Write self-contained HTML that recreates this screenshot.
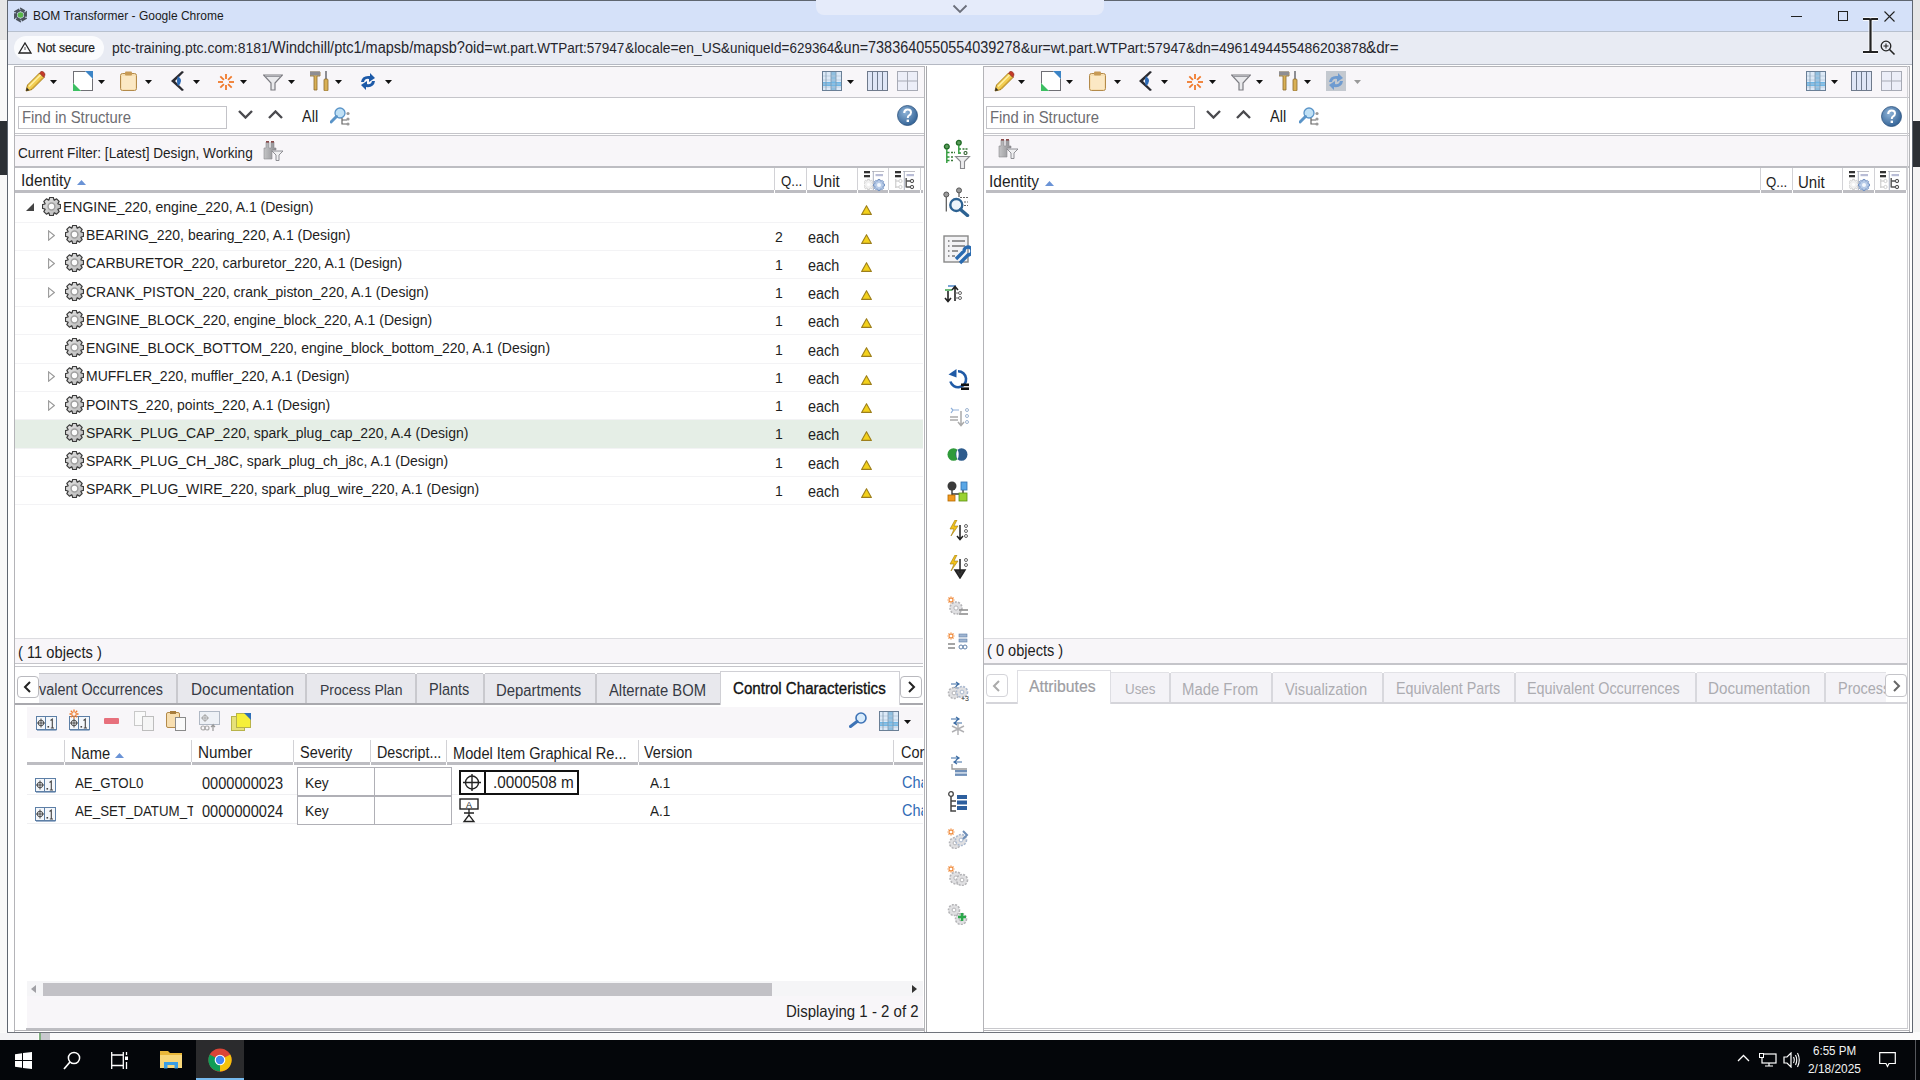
<!DOCTYPE html>
<html><head><meta charset="utf-8"><title>BOM Transformer</title><style>
*{box-sizing:border-box;margin:0;padding:0}
html,body{width:1920px;height:1080px;overflow:hidden;background:#f0f0f0;font-family:"Liberation Sans",sans-serif;color:#1e1e1e}
.a{position:absolute;display:block}
.t{position:absolute;white-space:nowrap;line-height:16px}
</style></head><body>
<div class="a" style="left:0px;top:0px;width:7px;height:1040px;background:#f8f8f8"></div>
<div class="a" style="left:0px;top:0px;width:7px;height:40px;background:#e6e6e6"></div>
<div class="a" style="left:0px;top:121px;width:7px;height:54px;background:#2c3035"></div>
<div class="a" style="left:1912px;top:0px;width:8px;height:1040px;background:#f4f4f4"></div>
<div class="a" style="left:1912px;top:0px;width:8px;height:40px;background:#e6e6e6"></div>
<div class="a" style="left:1912px;top:121px;width:8px;height:46px;background:#2c3035"></div>
<div class="a" style="left:0px;top:1032px;width:1920px;height:8px;background:#fbfbfb"></div>
<div class="a" style="left:0px;top:1033px;width:38px;height:7px;background:#f3f3f5"></div>
<div class="a" style="left:39px;top:1033px;width:2px;height:7px;background:#7fae7f"></div>
<div class="a" style="left:41px;top:1033px;width:9px;height:7px;background:#c9c9cf"></div>
<div class="a" style="left:7px;top:0px;width:1906px;height:1033px;background:#fff;border:1px solid #5f6670"></div>
<div class="a" style="left:8px;top:1px;width:1904px;height:31px;background:#d5e1f9"></div>
<div class="a" style="left:8px;top:31px;width:1904px;height:1px;background:#b7c0ce"></div>
<div class="a" style="left:816px;top:0px;width:288px;height:15px;background:#e5ebfa;border-radius:0 0 8px 8px"></div>
<svg class="a" style="left:952px;top:4px" width="16" height="10" viewBox="0 0 16 10"><path d="M1.5 1.5 L8 8 L14.5 1.5" stroke="#6b6f7b" stroke-width="1.8" fill="none"/></svg>
<svg class="a" style="left:13px;top:7px" width="15" height="16" viewBox="0 0 15 16"><polygon points="12.35,10.80 7.50,13.60 2.65,10.80 2.65,5.20 7.50,2.40 12.35,5.20" fill="none" stroke="#4b535d" stroke-width="3.2" stroke-dasharray="4.6 1"/><circle cx="7.5" cy="8" r="2.8" fill="#58b548"/></svg>
<div class="t" style="left:33px;top:8px;font-size:13.20px;color:#1b1b1b;transform:scaleX(0.9091);transform-origin:0 0;">BOM Transformer - Google Chrome</div>
<div class="a" style="left:1791px;top:16px;width:11px;height:1px;background:#222"></div>
<div class="a" style="left:1838px;top:11px;width:10px;height:10px;border:1.5px solid #222"></div>
<svg class="a" style="left:1884px;top:11px" width="11" height="11" viewBox="0 0 11 11"><path d="M0.5 0.5 L10.5 10.5 M10.5 0.5 L0.5 10.5" stroke="#222" stroke-width="1.1"/></svg>
<div class="a" style="left:8px;top:32px;width:1904px;height:33px;background:#e8ebf3"></div>
<div class="a" style="left:8px;top:64px;width:1904px;height:1px;background:#b5b9c3"></div>
<div class="a" style="left:14px;top:36px;width:90px;height:24px;background:#fafbfd;border-radius:12px"></div>
<svg class="a" style="left:18px;top:42px" width="14" height="12" viewBox="0 0 14 12"><path d="M7 1 L13 11 H1 Z" fill="none" stroke="#222" stroke-width="1.3"/><path d="M7 5 V8" stroke="#777" stroke-width="1.2"/></svg>
<div class="t" style="left:37px;top:40px;font-size:13.20px;color:#1e1e1e;transform:scaleX(0.9091);transform-origin:0 0;-webkit-text-stroke:0.25px #1e1e1e">Not secure</div>
<div class="t" style="left:111.5px;top:40px;font-size:15.36px;color:#26262c;transform:scaleX(0.9091);transform-origin:0 0;">ptc-training.ptc.com:8181</div>
<div class="t" style="left:268.3px;top:40px;font-size:15.98px;color:#26262c;transform:scaleX(0.9091);transform-origin:0 0;">/Windchill/ptc1/mapsb/mapsb?oid=</div>
<div class="t" style="left:493.3px;top:40px;font-size:14.85px;color:#26262c;transform:scaleX(0.9091);transform-origin:0 0;">wt.part.WTPart:57947</div>
<div class="t" style="left:624.5px;top:40px;font-size:15.26px;color:#26262c;transform:scaleX(0.9091);transform-origin:0 0;">&amp;locale=en_US</div>
<div class="t" style="left:720.5px;top:40px;font-size:14.81px;color:#26262c;transform:scaleX(0.9091);transform-origin:0 0;">&amp;uniqueId=629364</div>
<div class="t" style="left:833.9px;top:40px;font-size:15.87px;color:#26262c;transform:scaleX(0.9091);transform-origin:0 0;">&amp;un=7383640550554039278</div>
<div class="t" style="left:1020.5px;top:40px;font-size:15.29px;color:#26262c;transform:scaleX(0.9091);transform-origin:0 0;">&amp;ur=wt.part.WTPart:57947</div>
<div class="t" style="left:1185.5px;top:40px;font-size:15.36px;color:#26262c;transform:scaleX(0.9091);transform-origin:0 0;">&amp;dn=4961494455486203878</div>
<div class="t" style="left:1366.0px;top:40px;font-size:16.72px;color:#26262c;transform:scaleX(0.9091);transform-origin:0 0;">&amp;dr=</div>
<svg class="a" style="left:1861px;top:16px" width="19" height="39" viewBox="0 0 19 39"><path d="M2 3 H8 Q9.5 3 9.5 4.5 V34.5 Q9.5 36 8 36 H2 M17 3 H11 Q9.5 3 9.5 4.5 M9.5 34.5 Q9.5 36 11 36 H17" stroke="#fff" stroke-width="4" fill="none" opacity="0.8"/><path d="M2 3 H8 Q9.5 3 9.5 4.5 V34.5 Q9.5 36 8 36 H2 M17 3 H11 Q9.5 3 9.5 4.5 M9.5 34.5 Q9.5 36 11 36 H17" stroke="#222" stroke-width="2.2" fill="none"/></svg>
<svg class="a" style="left:1880px;top:40px" width="16" height="16" viewBox="0 0 16 16"><circle cx="6" cy="6" r="4.8" fill="none" stroke="#222" stroke-width="1.3"/><path d="M3.5 6 H8.5 M6 3.5 V8.5" stroke="#222" stroke-width="1.1"/><path d="M9.5 9.5 L14.5 14.5" stroke="#222" stroke-width="1.6"/></svg>
<div class="a" style="left:8px;top:65px;width:1903px;height:967px;background:#fff"></div>
<div class="a" style="left:14px;top:66px;width:911px;height:966px;border:1px solid #b4b4b8;border-bottom:none;background:#fff"></div>
<div class="a" style="left:15px;top:67px;width:909px;height:31px;background:#f8f6f9"></div>
<div class="a" style="left:15px;top:97px;width:909px;height:1px;background:#c5c5ca"></div>
<div class="a" style="left:15px;top:133px;width:909px;height:1px;background:#c5c5ca"></div>
<div class="a" style="left:15px;top:135px;width:909px;height:1px;background:#c5c5ca"></div>
<div class="a" style="left:15px;top:136px;width:909px;height:30px;background:#f8f6f9"></div>
<div class="a" style="left:15px;top:166px;width:909px;height:2px;background:#bdbdc2"></div>
<svg class="a" style="left:25px;top:71px" width="21" height="21" viewBox="0 0 21 21"><path d="M1 20 L2.5 14 L14.5 2 L19 6.5 L7 18.5 Z" fill="#f2cd52" stroke="#a87f1e" stroke-width="1"/><path d="M14.5 2 L16 0.6 Q17.3 -0.2 18.8 1.2 Q20.6 3 19.8 4.4 L19 6.5 Z" fill="#c43a2a" stroke="#8a2a1e" stroke-width="0.6"/><path d="M1 20 L1.8 16.6 L4.4 19.2 Z" fill="#2b2b2b"/><path d="M4 15.5 L15.5 4" stroke="#fff1a8" stroke-width="1.4"/><path d="M6.5 18 L18 6.5" stroke="#c99a2a" stroke-width="1"/></svg>
<svg class="a" style="left:50px;top:80px" width="7" height="4" viewBox="0 0 7 4"><path d="M0 0H7L3.5 4Z" fill="#111"/></svg>
<svg class="a" style="left:73px;top:71px" width="20" height="20" viewBox="0 0 20 20"><rect x="0.5" y="0.5" width="19" height="19" fill="#fff" stroke="#6f6f75"/><path d="M11 -1 H21 V9 Z" fill="#f7f6f9"/><path d="M12 0 H20 V8 Z" fill="#3b84c6"/><path d="M-1 11 V21 H9 Z" fill="#f7f6f9"/><path d="M0 12 V20 H8 Z" fill="#3cbf62"/></svg>
<svg class="a" style="left:98px;top:80px" width="7" height="4" viewBox="0 0 7 4"><path d="M0 0H7L3.5 4Z" fill="#111"/></svg>
<svg class="a" style="left:120px;top:71px" width="18" height="20" viewBox="0 0 18 20"><rect x="0.5" y="2.5" width="16" height="17" rx="2" fill="#f7deb0" stroke="#b38a4a"/><rect x="5" y="0.5" width="7" height="4" rx="1" fill="#c79a55"/><rect x="2" y="5" width="13" height="13" fill="#fbe8c4"/></svg>
<svg class="a" style="left:145px;top:80px" width="7" height="4" viewBox="0 0 7 4"><path d="M0 0H7L3.5 4Z" fill="#111"/></svg>
<svg class="a" style="left:170px;top:71px" width="15" height="20" viewBox="0 0 15 20"><path d="M12 0 L1 10 L12 20 L14 19 L5 10 L14 1Z" fill="#2a2a30"/><path d="M8 5 Q14 10 8 15 Q6 10 8 5Z" fill="#2e6bb7"/></svg>
<svg class="a" style="left:193px;top:80px" width="7" height="4" viewBox="0 0 7 4"><path d="M0 0H7L3.5 4Z" fill="#111"/></svg>
<svg class="a" style="left:218px;top:74px" width="16" height="16" viewBox="0 0 16 16"><line x1="11.0" y1="8.0" x2="16.0" y2="8.0" stroke="#f07a2b" stroke-width="1.8"/><line x1="10.1" y1="10.1" x2="13.7" y2="13.7" stroke="#f07a2b" stroke-width="1.8"/><line x1="8.0" y1="11.0" x2="8.0" y2="16.0" stroke="#f07a2b" stroke-width="1.8"/><line x1="5.9" y1="10.1" x2="2.3" y2="13.7" stroke="#f07a2b" stroke-width="1.8"/><line x1="5.0" y1="8.0" x2="0.0" y2="8.0" stroke="#f07a2b" stroke-width="1.8"/><line x1="5.9" y1="5.9" x2="2.3" y2="2.3" stroke="#f07a2b" stroke-width="1.8"/><line x1="8.0" y1="5.0" x2="8.0" y2="0.0" stroke="#f07a2b" stroke-width="1.8"/><line x1="10.1" y1="5.9" x2="13.7" y2="2.3" stroke="#f07a2b" stroke-width="1.8"/></svg>
<svg class="a" style="left:240px;top:80px" width="7" height="4" viewBox="0 0 7 4"><path d="M0 0H7L3.5 4Z" fill="#111"/></svg>
<svg class="a" style="left:263px;top:74px" width="20" height="17" viewBox="0 0 20 17"><path d="M0.5 1 L19.5 1 L12 9 V16 H8 V9 Z" fill="#e9e9ec" stroke="#7c7c82" stroke-width="1.2"/><path d="M3 2.5 H17" stroke="#9a9aa0"/></svg>
<svg class="a" style="left:288px;top:80px" width="7" height="4" viewBox="0 0 7 4"><path d="M0 0H7L3.5 4Z" fill="#111"/></svg>
<svg class="a" style="left:310px;top:71px" width="20" height="20" viewBox="0 0 20 20"><path d="M0 1 H10 V5 H7 V19 H4 V5 H0 Z" fill="#d9b055" stroke="#8b6a2c" stroke-width="0.8"/><rect x="0" y="0.5" width="10" height="4" fill="#8d8d93"/><rect x="15" y="0" width="2" height="8" fill="#8d8d93"/><rect x="14" y="8" width="4" height="12" rx="1" fill="#d9b055" stroke="#8b6a2c" stroke-width="0.8"/></svg>
<svg class="a" style="left:335px;top:80px" width="7" height="4" viewBox="0 0 7 4"><path d="M0 0H7L3.5 4Z" fill="#111"/></svg>
<svg class="a" style="left:358px;top:73px" width="20" height="17" viewBox="0 0 20 17"><path d="M3 9 Q4 2 12 3 L12 0 L17 5 L11 9 L11 6 Q7 5 6 9Z" fill="#1d5aa8"/><path d="M17 8 Q16 15 8 14 L8 17 L3 12 L9 8 L9 11 Q13 12 14 8Z" fill="#1d5aa8"/></svg>
<svg class="a" style="left:385px;top:80px" width="7" height="4" viewBox="0 0 7 4"><path d="M0 0H7L3.5 4Z" fill="#111"/></svg>
<svg class="a" style="left:822px;top:71px" width="20" height="20" viewBox="0 0 20 20"><rect x="0.5" y="0.5" width="19" height="19" fill="#dce9f7" stroke="#6a7f96"/><rect x="9" y="1" width="5" height="18" fill="#8fbfe0"/><rect x="1" y="11" width="18" height="4" fill="#6fb7e6"/><line x1="1" y1="5" x2="19" y2="5" stroke="#b6c9dc" stroke-width="0.8"/><line x1="1" y1="9" x2="19" y2="9" stroke="#b6c9dc" stroke-width="0.8"/><line x1="1" y1="13" x2="19" y2="13" stroke="#b6c9dc" stroke-width="0.8"/><line x1="1" y1="16" x2="19" y2="16" stroke="#b6c9dc" stroke-width="0.8"/><line x1="4" y1="1" x2="4" y2="19" stroke="#7f97ad" stroke-width="0.8"/><line x1="9" y1="1" x2="9" y2="19" stroke="#7f97ad" stroke-width="0.8"/><line x1="14" y1="1" x2="14" y2="19" stroke="#7f97ad" stroke-width="0.8"/></svg>
<svg class="a" style="left:847px;top:80px" width="7" height="4" viewBox="0 0 7 4"><path d="M0 0H7L3.5 4Z" fill="#111"/></svg>
<svg class="a" style="left:867px;top:71px" width="21" height="20" viewBox="0 0 21 20"><rect x="0.5" y="0.5" width="20" height="19" fill="#dfe6f6" stroke="#6f7a8c"/><path d="M5.5 1V19M10.5 1V19M15.5 1V19" stroke="#6f7a8c"/></svg>
<svg class="a" style="left:897px;top:71px" width="21" height="20" viewBox="0 0 21 20"><rect x="0.5" y="0.5" width="20" height="19" fill="#eceef8" stroke="#a7aab5"/><path d="M10.5 1V19M1 10H20" stroke="#a7aab5"/></svg>
<div class="a" style="left:18px;top:106px;width:209px;height:23px;border:1px solid #c3c3c8;background:#fff"></div>
<div class="t" style="left:21.5px;top:109px;font-size:16.34px;color:#6d6d72;transform:scaleX(0.9091);transform-origin:0 0;">Find in Structure</div>
<svg class="a" style="left:238px;top:110px" width="15" height="9" viewBox="0 0 15 9"><path d="M1 1 L7.5 7.5 L14 1" stroke="#4a4a4e" stroke-width="2.4" fill="none"/></svg>
<svg class="a" style="left:268px;top:110px" width="15" height="9" viewBox="0 0 15 9"><path d="M1 8 L7.5 1.5 L14 8" stroke="#4a4a4e" stroke-width="2.4" fill="none"/></svg>
<div class="t" style="left:302px;top:109px;font-size:15.95px;color:#1e1e1e;transform:scaleX(0.9091);transform-origin:0 0;">All</div>
<svg class="a" style="left:330px;top:107px" width="21" height="19" viewBox="0 0 21 19"><circle cx="10" cy="6" r="5" fill="#bfe0f5" stroke="#5a94c8" stroke-width="1.3"/><path d="M6.5 9.5 L1 15" stroke="#5a94c8" stroke-width="3" stroke-linecap="round"/><path d="M12 11 V17 H17 M12 13 H17" stroke="#666" stroke-width="1.2" fill="none"/><circle cx="18" cy="6.5" r="1.6" fill="#999"/><circle cx="18" cy="12" r="1.6" fill="#999"/><circle cx="18" cy="17" r="1.6" fill="#999"/></svg>
<svg class="a" style="left:897px;top:105px" width="21" height="21" viewBox="0 0 21 21"><defs><radialGradient id="hg" cx="0.4" cy="0.35" r="0.7"><stop offset="0" stop-color="#8fb4d8"/><stop offset="1" stop-color="#2f5f93"/></radialGradient></defs><circle cx="10.5" cy="10.5" r="10" fill="url(#hg)" stroke="#2b517c" stroke-width="0.8"/><path d="M7.2 8 Q7.2 4.5 10.6 4.5 Q14 4.5 14 7.6 Q14 9.5 11.8 10.6 Q10.8 11.2 10.8 13" stroke="#fff" stroke-width="2" fill="none"/><rect x="9.6" y="14.6" width="2.4" height="2.4" fill="#fff"/></svg>
<div class="t" style="left:18px;top:145px;font-size:14.96px;color:#1e1e1e;transform:scaleX(0.9091);transform-origin:0 0;">Current Filter: [Latest] Design, Working</div>
<svg class="a" style="left:263px;top:141px" width="21" height="20" viewBox="0 0 21 20"><defs><linearGradient id="fg" x1="0" y1="0" x2="1" y2="0"><stop offset="0" stop-color="#c4c4c6"/><stop offset="1" stop-color="#8e8e92"/></linearGradient></defs><path d="M1 18 V7 H3 V1 H6 V7 H8 V1 H11 V7 H13 V9 H9 L9 18 Z" fill="url(#fg)" stroke="#8a8a8e" stroke-width="0.6"/><rect x="3" y="0" width="3" height="1.6" fill="#8a4a4a"/><rect x="8" y="0" width="3" height="1.6" fill="#8a4a4a"/><path d="M9 10 H20 L16 14 V19.5 H13 V14 Z" fill="#efeff1" stroke="#85858a" stroke-width="0.9"/></svg>
<div class="a" style="left:15px;top:190px;width:908px;height:3px;background:#bdbdc2"></div>
<div class="a" style="left:774px;top:168px;width:1px;height:25px;background:#d2d2d6"></div>
<div class="a" style="left:774px;top:190px;width:1px;height:3px;background:#fff"></div>
<div class="a" style="left:806px;top:168px;width:1px;height:25px;background:#d2d2d6"></div>
<div class="a" style="left:806px;top:190px;width:1px;height:3px;background:#fff"></div>
<div class="a" style="left:857px;top:168px;width:1px;height:25px;background:#d2d2d6"></div>
<div class="a" style="left:857px;top:190px;width:1px;height:3px;background:#fff"></div>
<div class="a" style="left:888px;top:168px;width:1px;height:25px;background:#d2d2d6"></div>
<div class="a" style="left:888px;top:190px;width:1px;height:3px;background:#fff"></div>
<div class="a" style="left:920px;top:168px;width:1px;height:25px;background:#d2d2d6"></div>
<div class="a" style="left:920px;top:190px;width:1px;height:3px;background:#fff"></div>
<div class="t" style="left:21px;top:173px;font-size:17.05px;color:#1e1e1e;transform:scaleX(0.9091);transform-origin:0 0;">Identity</div>
<svg class="a" style="left:77px;top:180px" width="9" height="5" viewBox="0 0 9 5"><path d="M0 5 L4.5 0 L9 5Z" fill="#6a93d6"/></svg>
<div class="t" style="left:781px;top:173px;font-size:14.52px;color:#1e1e1e;transform:scaleX(0.9091);transform-origin:0 0;">Q...</div>
<div class="t" style="left:813px;top:173px;font-size:16.50px;color:#1e1e1e;transform:scaleX(0.9091);transform-origin:0 0;">Unit</div>
<div class="a" style="left:15px;top:222px;width:908px;height:1px;background:#f3f3f5"></div>
<svg class="a" style="left:26px;top:203px" width="8" height="8" viewBox="0 0 8 8"><path d="M8 0 V8 H0 Z" fill="#444"/></svg>
<svg class="a" style="left:42px;top:197px" width="19" height="19" viewBox="0 0 19 19"><defs><linearGradient id="gg" x1="0" y1="0" x2="1" y2="1"><stop offset="0" stop-color="#e6e6e6"/><stop offset="1" stop-color="#b4b4b4"/></linearGradient></defs><polygon points="7.03,2.95 7.67,0.48 11.33,0.48 11.97,2.95 12.39,3.12 14.58,1.83 17.17,4.42 15.88,6.61 16.05,7.03 18.52,7.67 18.52,11.33 16.05,11.97 15.88,12.39 17.17,14.58 14.58,17.17 12.39,15.88 11.97,16.05 11.33,18.52 7.67,18.52 7.03,16.05 6.61,15.88 4.42,17.17 1.83,14.58 3.12,12.39 2.95,11.97 0.48,11.33 0.48,7.67 2.95,7.03 3.12,6.61 1.83,4.42 4.42,1.83 6.61,3.12" fill="url(#gg)" stroke="#3a3a3a" stroke-width="1.2" stroke-linejoin="round"/><circle cx="9.5" cy="9.5" r="3.4" fill="#fdfdfd" stroke="#a0a0a0" stroke-width="1.5"/></svg>
<div class="t" style="left:63px;top:199px;font-size:15.40px;color:#1e1e1e;transform:scaleX(0.9091);transform-origin:0 0;">ENGINE_220, engine_220, A.1 (Design)</div>
<svg class="a" style="left:861px;top:205px" width="11" height="10" viewBox="0 0 11 10"><path d="M5.5 0.7 L10.4 9.4 H0.6 Z" fill="#f3d11c" stroke="#9d7f1c" stroke-width="1.1" stroke-linejoin="round"/></svg>
<div class="a" style="left:15px;top:250px;width:908px;height:1px;background:#f3f3f5"></div>
<svg class="a" style="left:48px;top:230px" width="7" height="11" viewBox="0 0 7 11"><path d="M0.6 0.8 L6.3 5.5 L0.6 10.2 Z" fill="#fff" stroke="#9a9a9a" stroke-width="1.1"/></svg>
<svg class="a" style="left:65px;top:225px" width="19" height="19" viewBox="0 0 19 19"><defs><linearGradient id="gg" x1="0" y1="0" x2="1" y2="1"><stop offset="0" stop-color="#e6e6e6"/><stop offset="1" stop-color="#b4b4b4"/></linearGradient></defs><polygon points="7.03,2.95 7.67,0.48 11.33,0.48 11.97,2.95 12.39,3.12 14.58,1.83 17.17,4.42 15.88,6.61 16.05,7.03 18.52,7.67 18.52,11.33 16.05,11.97 15.88,12.39 17.17,14.58 14.58,17.17 12.39,15.88 11.97,16.05 11.33,18.52 7.67,18.52 7.03,16.05 6.61,15.88 4.42,17.17 1.83,14.58 3.12,12.39 2.95,11.97 0.48,11.33 0.48,7.67 2.95,7.03 3.12,6.61 1.83,4.42 4.42,1.83 6.61,3.12" fill="url(#gg)" stroke="#3a3a3a" stroke-width="1.2" stroke-linejoin="round"/><circle cx="9.5" cy="9.5" r="3.4" fill="#fdfdfd" stroke="#a0a0a0" stroke-width="1.5"/></svg>
<div class="t" style="left:85.5px;top:227px;font-size:15.40px;color:#1e1e1e;transform:scaleX(0.9091);transform-origin:0 0;">BEARING_220, bearing_220, A.1 (Design)</div>
<div class="t" style="left:775px;top:229px;font-size:15.40px;color:#1e1e1e;transform:scaleX(0.9091);transform-origin:0 0;">2</div>
<div class="t" style="left:808px;top:230px;font-size:15.84px;color:#1e1e1e;transform:scaleX(0.9091);transform-origin:0 0;">each</div>
<svg class="a" style="left:861px;top:234px" width="11" height="10" viewBox="0 0 11 10"><path d="M5.5 0.7 L10.4 9.4 H0.6 Z" fill="#f3d11c" stroke="#9d7f1c" stroke-width="1.1" stroke-linejoin="round"/></svg>
<div class="a" style="left:15px;top:278px;width:908px;height:1px;background:#f3f3f5"></div>
<svg class="a" style="left:48px;top:258px" width="7" height="11" viewBox="0 0 7 11"><path d="M0.6 0.8 L6.3 5.5 L0.6 10.2 Z" fill="#fff" stroke="#9a9a9a" stroke-width="1.1"/></svg>
<svg class="a" style="left:65px;top:253px" width="19" height="19" viewBox="0 0 19 19"><defs><linearGradient id="gg" x1="0" y1="0" x2="1" y2="1"><stop offset="0" stop-color="#e6e6e6"/><stop offset="1" stop-color="#b4b4b4"/></linearGradient></defs><polygon points="7.03,2.95 7.67,0.48 11.33,0.48 11.97,2.95 12.39,3.12 14.58,1.83 17.17,4.42 15.88,6.61 16.05,7.03 18.52,7.67 18.52,11.33 16.05,11.97 15.88,12.39 17.17,14.58 14.58,17.17 12.39,15.88 11.97,16.05 11.33,18.52 7.67,18.52 7.03,16.05 6.61,15.88 4.42,17.17 1.83,14.58 3.12,12.39 2.95,11.97 0.48,11.33 0.48,7.67 2.95,7.03 3.12,6.61 1.83,4.42 4.42,1.83 6.61,3.12" fill="url(#gg)" stroke="#3a3a3a" stroke-width="1.2" stroke-linejoin="round"/><circle cx="9.5" cy="9.5" r="3.4" fill="#fdfdfd" stroke="#a0a0a0" stroke-width="1.5"/></svg>
<div class="t" style="left:85.5px;top:255px;font-size:15.40px;color:#1e1e1e;transform:scaleX(0.9091);transform-origin:0 0;">CARBURETOR_220, carburetor_220, A.1 (Design)</div>
<div class="t" style="left:775px;top:257px;font-size:15.40px;color:#1e1e1e;transform:scaleX(0.9091);transform-origin:0 0;">1</div>
<div class="t" style="left:808px;top:258px;font-size:15.84px;color:#1e1e1e;transform:scaleX(0.9091);transform-origin:0 0;">each</div>
<svg class="a" style="left:861px;top:262px" width="11" height="10" viewBox="0 0 11 10"><path d="M5.5 0.7 L10.4 9.4 H0.6 Z" fill="#f3d11c" stroke="#9d7f1c" stroke-width="1.1" stroke-linejoin="round"/></svg>
<div class="a" style="left:15px;top:306px;width:908px;height:1px;background:#f3f3f5"></div>
<svg class="a" style="left:48px;top:287px" width="7" height="11" viewBox="0 0 7 11"><path d="M0.6 0.8 L6.3 5.5 L0.6 10.2 Z" fill="#fff" stroke="#9a9a9a" stroke-width="1.1"/></svg>
<svg class="a" style="left:65px;top:282px" width="19" height="19" viewBox="0 0 19 19"><defs><linearGradient id="gg" x1="0" y1="0" x2="1" y2="1"><stop offset="0" stop-color="#e6e6e6"/><stop offset="1" stop-color="#b4b4b4"/></linearGradient></defs><polygon points="7.03,2.95 7.67,0.48 11.33,0.48 11.97,2.95 12.39,3.12 14.58,1.83 17.17,4.42 15.88,6.61 16.05,7.03 18.52,7.67 18.52,11.33 16.05,11.97 15.88,12.39 17.17,14.58 14.58,17.17 12.39,15.88 11.97,16.05 11.33,18.52 7.67,18.52 7.03,16.05 6.61,15.88 4.42,17.17 1.83,14.58 3.12,12.39 2.95,11.97 0.48,11.33 0.48,7.67 2.95,7.03 3.12,6.61 1.83,4.42 4.42,1.83 6.61,3.12" fill="url(#gg)" stroke="#3a3a3a" stroke-width="1.2" stroke-linejoin="round"/><circle cx="9.5" cy="9.5" r="3.4" fill="#fdfdfd" stroke="#a0a0a0" stroke-width="1.5"/></svg>
<div class="t" style="left:85.5px;top:284px;font-size:15.40px;color:#1e1e1e;transform:scaleX(0.9091);transform-origin:0 0;">CRANK_PISTON_220, crank_piston_220, A.1 (Design)</div>
<div class="t" style="left:775px;top:285px;font-size:15.40px;color:#1e1e1e;transform:scaleX(0.9091);transform-origin:0 0;">1</div>
<div class="t" style="left:808px;top:286px;font-size:15.84px;color:#1e1e1e;transform:scaleX(0.9091);transform-origin:0 0;">each</div>
<svg class="a" style="left:861px;top:290px" width="11" height="10" viewBox="0 0 11 10"><path d="M5.5 0.7 L10.4 9.4 H0.6 Z" fill="#f3d11c" stroke="#9d7f1c" stroke-width="1.1" stroke-linejoin="round"/></svg>
<div class="a" style="left:15px;top:334px;width:908px;height:1px;background:#f3f3f5"></div>
<svg class="a" style="left:65px;top:310px" width="19" height="19" viewBox="0 0 19 19"><defs><linearGradient id="gg" x1="0" y1="0" x2="1" y2="1"><stop offset="0" stop-color="#e6e6e6"/><stop offset="1" stop-color="#b4b4b4"/></linearGradient></defs><polygon points="7.03,2.95 7.67,0.48 11.33,0.48 11.97,2.95 12.39,3.12 14.58,1.83 17.17,4.42 15.88,6.61 16.05,7.03 18.52,7.67 18.52,11.33 16.05,11.97 15.88,12.39 17.17,14.58 14.58,17.17 12.39,15.88 11.97,16.05 11.33,18.52 7.67,18.52 7.03,16.05 6.61,15.88 4.42,17.17 1.83,14.58 3.12,12.39 2.95,11.97 0.48,11.33 0.48,7.67 2.95,7.03 3.12,6.61 1.83,4.42 4.42,1.83 6.61,3.12" fill="url(#gg)" stroke="#3a3a3a" stroke-width="1.2" stroke-linejoin="round"/><circle cx="9.5" cy="9.5" r="3.4" fill="#fdfdfd" stroke="#a0a0a0" stroke-width="1.5"/></svg>
<div class="t" style="left:85.5px;top:312px;font-size:15.40px;color:#1e1e1e;transform:scaleX(0.9091);transform-origin:0 0;">ENGINE_BLOCK_220, engine_block_220, A.1 (Design)</div>
<div class="t" style="left:775px;top:313px;font-size:15.40px;color:#1e1e1e;transform:scaleX(0.9091);transform-origin:0 0;">1</div>
<div class="t" style="left:808px;top:314px;font-size:15.84px;color:#1e1e1e;transform:scaleX(0.9091);transform-origin:0 0;">each</div>
<svg class="a" style="left:861px;top:318px" width="11" height="10" viewBox="0 0 11 10"><path d="M5.5 0.7 L10.4 9.4 H0.6 Z" fill="#f3d11c" stroke="#9d7f1c" stroke-width="1.1" stroke-linejoin="round"/></svg>
<div class="a" style="left:15px;top:363px;width:908px;height:1px;background:#f3f3f5"></div>
<svg class="a" style="left:65px;top:338px" width="19" height="19" viewBox="0 0 19 19"><defs><linearGradient id="gg" x1="0" y1="0" x2="1" y2="1"><stop offset="0" stop-color="#e6e6e6"/><stop offset="1" stop-color="#b4b4b4"/></linearGradient></defs><polygon points="7.03,2.95 7.67,0.48 11.33,0.48 11.97,2.95 12.39,3.12 14.58,1.83 17.17,4.42 15.88,6.61 16.05,7.03 18.52,7.67 18.52,11.33 16.05,11.97 15.88,12.39 17.17,14.58 14.58,17.17 12.39,15.88 11.97,16.05 11.33,18.52 7.67,18.52 7.03,16.05 6.61,15.88 4.42,17.17 1.83,14.58 3.12,12.39 2.95,11.97 0.48,11.33 0.48,7.67 2.95,7.03 3.12,6.61 1.83,4.42 4.42,1.83 6.61,3.12" fill="url(#gg)" stroke="#3a3a3a" stroke-width="1.2" stroke-linejoin="round"/><circle cx="9.5" cy="9.5" r="3.4" fill="#fdfdfd" stroke="#a0a0a0" stroke-width="1.5"/></svg>
<div class="t" style="left:85.5px;top:340px;font-size:15.40px;color:#1e1e1e;transform:scaleX(0.9091);transform-origin:0 0;">ENGINE_BLOCK_BOTTOM_220, engine_block_bottom_220, A.1 (Design)</div>
<div class="t" style="left:775px;top:342px;font-size:15.40px;color:#1e1e1e;transform:scaleX(0.9091);transform-origin:0 0;">1</div>
<div class="t" style="left:808px;top:343px;font-size:15.84px;color:#1e1e1e;transform:scaleX(0.9091);transform-origin:0 0;">each</div>
<svg class="a" style="left:861px;top:347px" width="11" height="10" viewBox="0 0 11 10"><path d="M5.5 0.7 L10.4 9.4 H0.6 Z" fill="#f3d11c" stroke="#9d7f1c" stroke-width="1.1" stroke-linejoin="round"/></svg>
<div class="a" style="left:15px;top:391px;width:908px;height:1px;background:#f3f3f5"></div>
<svg class="a" style="left:48px;top:371px" width="7" height="11" viewBox="0 0 7 11"><path d="M0.6 0.8 L6.3 5.5 L0.6 10.2 Z" fill="#fff" stroke="#9a9a9a" stroke-width="1.1"/></svg>
<svg class="a" style="left:65px;top:366px" width="19" height="19" viewBox="0 0 19 19"><defs><linearGradient id="gg" x1="0" y1="0" x2="1" y2="1"><stop offset="0" stop-color="#e6e6e6"/><stop offset="1" stop-color="#b4b4b4"/></linearGradient></defs><polygon points="7.03,2.95 7.67,0.48 11.33,0.48 11.97,2.95 12.39,3.12 14.58,1.83 17.17,4.42 15.88,6.61 16.05,7.03 18.52,7.67 18.52,11.33 16.05,11.97 15.88,12.39 17.17,14.58 14.58,17.17 12.39,15.88 11.97,16.05 11.33,18.52 7.67,18.52 7.03,16.05 6.61,15.88 4.42,17.17 1.83,14.58 3.12,12.39 2.95,11.97 0.48,11.33 0.48,7.67 2.95,7.03 3.12,6.61 1.83,4.42 4.42,1.83 6.61,3.12" fill="url(#gg)" stroke="#3a3a3a" stroke-width="1.2" stroke-linejoin="round"/><circle cx="9.5" cy="9.5" r="3.4" fill="#fdfdfd" stroke="#a0a0a0" stroke-width="1.5"/></svg>
<div class="t" style="left:85.5px;top:368px;font-size:15.40px;color:#1e1e1e;transform:scaleX(0.9091);transform-origin:0 0;">MUFFLER_220, muffler_220, A.1 (Design)</div>
<div class="t" style="left:775px;top:370px;font-size:15.40px;color:#1e1e1e;transform:scaleX(0.9091);transform-origin:0 0;">1</div>
<div class="t" style="left:808px;top:371px;font-size:15.84px;color:#1e1e1e;transform:scaleX(0.9091);transform-origin:0 0;">each</div>
<svg class="a" style="left:861px;top:375px" width="11" height="10" viewBox="0 0 11 10"><path d="M5.5 0.7 L10.4 9.4 H0.6 Z" fill="#f3d11c" stroke="#9d7f1c" stroke-width="1.1" stroke-linejoin="round"/></svg>
<div class="a" style="left:15px;top:419px;width:908px;height:1px;background:#f3f3f5"></div>
<svg class="a" style="left:48px;top:400px" width="7" height="11" viewBox="0 0 7 11"><path d="M0.6 0.8 L6.3 5.5 L0.6 10.2 Z" fill="#fff" stroke="#9a9a9a" stroke-width="1.1"/></svg>
<svg class="a" style="left:65px;top:395px" width="19" height="19" viewBox="0 0 19 19"><defs><linearGradient id="gg" x1="0" y1="0" x2="1" y2="1"><stop offset="0" stop-color="#e6e6e6"/><stop offset="1" stop-color="#b4b4b4"/></linearGradient></defs><polygon points="7.03,2.95 7.67,0.48 11.33,0.48 11.97,2.95 12.39,3.12 14.58,1.83 17.17,4.42 15.88,6.61 16.05,7.03 18.52,7.67 18.52,11.33 16.05,11.97 15.88,12.39 17.17,14.58 14.58,17.17 12.39,15.88 11.97,16.05 11.33,18.52 7.67,18.52 7.03,16.05 6.61,15.88 4.42,17.17 1.83,14.58 3.12,12.39 2.95,11.97 0.48,11.33 0.48,7.67 2.95,7.03 3.12,6.61 1.83,4.42 4.42,1.83 6.61,3.12" fill="url(#gg)" stroke="#3a3a3a" stroke-width="1.2" stroke-linejoin="round"/><circle cx="9.5" cy="9.5" r="3.4" fill="#fdfdfd" stroke="#a0a0a0" stroke-width="1.5"/></svg>
<div class="t" style="left:85.5px;top:397px;font-size:15.40px;color:#1e1e1e;transform:scaleX(0.9091);transform-origin:0 0;">POINTS_220, points_220, A.1 (Design)</div>
<div class="t" style="left:775px;top:398px;font-size:15.40px;color:#1e1e1e;transform:scaleX(0.9091);transform-origin:0 0;">1</div>
<div class="t" style="left:808px;top:399px;font-size:15.84px;color:#1e1e1e;transform:scaleX(0.9091);transform-origin:0 0;">each</div>
<svg class="a" style="left:861px;top:403px" width="11" height="10" viewBox="0 0 11 10"><path d="M5.5 0.7 L10.4 9.4 H0.6 Z" fill="#f3d11c" stroke="#9d7f1c" stroke-width="1.1" stroke-linejoin="round"/></svg>
<div class="a" style="left:15px;top:420px;width:908px;height:28px;background:#e5eee6"></div>
<div class="a" style="left:15px;top:448px;width:908px;height:1px;background:#f3f3f5"></div>
<svg class="a" style="left:65px;top:423px" width="19" height="19" viewBox="0 0 19 19"><defs><linearGradient id="gg" x1="0" y1="0" x2="1" y2="1"><stop offset="0" stop-color="#e6e6e6"/><stop offset="1" stop-color="#b4b4b4"/></linearGradient></defs><polygon points="7.03,2.95 7.67,0.48 11.33,0.48 11.97,2.95 12.39,3.12 14.58,1.83 17.17,4.42 15.88,6.61 16.05,7.03 18.52,7.67 18.52,11.33 16.05,11.97 15.88,12.39 17.17,14.58 14.58,17.17 12.39,15.88 11.97,16.05 11.33,18.52 7.67,18.52 7.03,16.05 6.61,15.88 4.42,17.17 1.83,14.58 3.12,12.39 2.95,11.97 0.48,11.33 0.48,7.67 2.95,7.03 3.12,6.61 1.83,4.42 4.42,1.83 6.61,3.12" fill="url(#gg)" stroke="#3a3a3a" stroke-width="1.2" stroke-linejoin="round"/><circle cx="9.5" cy="9.5" r="3.4" fill="#fdfdfd" stroke="#a0a0a0" stroke-width="1.5"/></svg>
<div class="t" style="left:85.5px;top:425px;font-size:15.40px;color:#1e1e1e;transform:scaleX(0.9091);transform-origin:0 0;">SPARK_PLUG_CAP_220, spark_plug_cap_220, A.4 (Design)</div>
<div class="t" style="left:775px;top:426px;font-size:15.40px;color:#1e1e1e;transform:scaleX(0.9091);transform-origin:0 0;">1</div>
<div class="t" style="left:808px;top:427px;font-size:15.84px;color:#1e1e1e;transform:scaleX(0.9091);transform-origin:0 0;">each</div>
<svg class="a" style="left:861px;top:431px" width="11" height="10" viewBox="0 0 11 10"><path d="M5.5 0.7 L10.4 9.4 H0.6 Z" fill="#f3d11c" stroke="#9d7f1c" stroke-width="1.1" stroke-linejoin="round"/></svg>
<div class="a" style="left:15px;top:476px;width:908px;height:1px;background:#f3f3f5"></div>
<svg class="a" style="left:65px;top:451px" width="19" height="19" viewBox="0 0 19 19"><defs><linearGradient id="gg" x1="0" y1="0" x2="1" y2="1"><stop offset="0" stop-color="#e6e6e6"/><stop offset="1" stop-color="#b4b4b4"/></linearGradient></defs><polygon points="7.03,2.95 7.67,0.48 11.33,0.48 11.97,2.95 12.39,3.12 14.58,1.83 17.17,4.42 15.88,6.61 16.05,7.03 18.52,7.67 18.52,11.33 16.05,11.97 15.88,12.39 17.17,14.58 14.58,17.17 12.39,15.88 11.97,16.05 11.33,18.52 7.67,18.52 7.03,16.05 6.61,15.88 4.42,17.17 1.83,14.58 3.12,12.39 2.95,11.97 0.48,11.33 0.48,7.67 2.95,7.03 3.12,6.61 1.83,4.42 4.42,1.83 6.61,3.12" fill="url(#gg)" stroke="#3a3a3a" stroke-width="1.2" stroke-linejoin="round"/><circle cx="9.5" cy="9.5" r="3.4" fill="#fdfdfd" stroke="#a0a0a0" stroke-width="1.5"/></svg>
<div class="t" style="left:85.5px;top:453px;font-size:15.40px;color:#1e1e1e;transform:scaleX(0.9091);transform-origin:0 0;">SPARK_PLUG_CH_J8C, spark_plug_ch_j8c, A.1 (Design)</div>
<div class="t" style="left:775px;top:455px;font-size:15.40px;color:#1e1e1e;transform:scaleX(0.9091);transform-origin:0 0;">1</div>
<div class="t" style="left:808px;top:456px;font-size:15.84px;color:#1e1e1e;transform:scaleX(0.9091);transform-origin:0 0;">each</div>
<svg class="a" style="left:861px;top:460px" width="11" height="10" viewBox="0 0 11 10"><path d="M5.5 0.7 L10.4 9.4 H0.6 Z" fill="#f3d11c" stroke="#9d7f1c" stroke-width="1.1" stroke-linejoin="round"/></svg>
<div class="a" style="left:15px;top:504px;width:908px;height:1px;background:#f3f3f5"></div>
<svg class="a" style="left:65px;top:479px" width="19" height="19" viewBox="0 0 19 19"><defs><linearGradient id="gg" x1="0" y1="0" x2="1" y2="1"><stop offset="0" stop-color="#e6e6e6"/><stop offset="1" stop-color="#b4b4b4"/></linearGradient></defs><polygon points="7.03,2.95 7.67,0.48 11.33,0.48 11.97,2.95 12.39,3.12 14.58,1.83 17.17,4.42 15.88,6.61 16.05,7.03 18.52,7.67 18.52,11.33 16.05,11.97 15.88,12.39 17.17,14.58 14.58,17.17 12.39,15.88 11.97,16.05 11.33,18.52 7.67,18.52 7.03,16.05 6.61,15.88 4.42,17.17 1.83,14.58 3.12,12.39 2.95,11.97 0.48,11.33 0.48,7.67 2.95,7.03 3.12,6.61 1.83,4.42 4.42,1.83 6.61,3.12" fill="url(#gg)" stroke="#3a3a3a" stroke-width="1.2" stroke-linejoin="round"/><circle cx="9.5" cy="9.5" r="3.4" fill="#fdfdfd" stroke="#a0a0a0" stroke-width="1.5"/></svg>
<div class="t" style="left:85.5px;top:481px;font-size:15.40px;color:#1e1e1e;transform:scaleX(0.9091);transform-origin:0 0;">SPARK_PLUG_WIRE_220, spark_plug_wire_220, A.1 (Design)</div>
<div class="t" style="left:775px;top:483px;font-size:15.40px;color:#1e1e1e;transform:scaleX(0.9091);transform-origin:0 0;">1</div>
<div class="t" style="left:808px;top:484px;font-size:15.84px;color:#1e1e1e;transform:scaleX(0.9091);transform-origin:0 0;">each</div>
<svg class="a" style="left:861px;top:488px" width="11" height="10" viewBox="0 0 11 10"><path d="M5.5 0.7 L10.4 9.4 H0.6 Z" fill="#f3d11c" stroke="#9d7f1c" stroke-width="1.1" stroke-linejoin="round"/></svg>
<svg class="a" style="left:864px;top:171px" width="21" height="21" viewBox="0 0 21 21"><rect x="0" y="0" width="6" height="2.3" fill="#333"/><rect x="0" y="4" width="6" height="2.3" fill="#333"/><path d="M8 0.4 H20" stroke="#a6a6ae" stroke-width="0.8"/><path d="M9.3 0 V19" stroke="#a3a9ba" stroke-width="0.9"/><rect x="11.5" y="3" width="7.5" height="2.2" fill="#b9bdd6"/><polygon points="8.37,12.30 9.63,12.62 9.63,14.38 8.37,14.70 8.09,15.39 8.75,16.50 7.50,17.75 6.39,17.09 5.70,17.37 5.38,18.63 3.62,18.63 3.30,17.37 2.61,17.09 1.50,17.75 0.25,16.50 0.91,15.39 0.63,14.70 -0.63,14.38 -0.63,12.62 0.63,12.30 0.91,11.61 0.25,10.50 1.50,9.25 2.61,9.91 3.30,9.63 3.62,8.37 5.38,8.37 5.70,9.63 6.39,9.91 7.50,9.25 8.75,10.50 8.09,11.61" fill="#f1f1f1" stroke="#c9c9c9" stroke-width="0.9"/><circle cx="4.5" cy="13.5" r="1.6" fill="#fff"/><polygon points="19.17,12.71 20.52,13.05 20.52,14.95 19.17,15.29 18.86,16.04 19.57,17.23 18.23,18.57 17.04,17.86 16.29,18.17 15.95,19.52 14.05,19.52 13.71,18.17 12.96,17.86 11.77,18.57 10.43,17.23 11.14,16.04 10.83,15.29 9.48,14.95 9.48,13.05 10.83,12.71 11.14,11.96 10.43,10.77 11.77,9.43 12.96,10.14 13.71,9.83 14.05,8.48 15.95,8.48 16.29,9.83 17.04,10.14 18.23,9.43 19.57,10.77 18.86,11.96" fill="#b7cbe8" stroke="#6f8fc0" stroke-width="1"/><circle cx="15" cy="14" r="2" fill="#f4f8fd"/></svg>
<svg class="a" style="left:895px;top:171px" width="21" height="21" viewBox="0 0 21 21"><rect x="0" y="0" width="6" height="2.3" fill="#333"/><rect x="0" y="4" width="6" height="2.3" fill="#333"/><path d="M8 0.4 H20" stroke="#a6a6ae" stroke-width="0.8"/><path d="M9.3 0 V19" stroke="#a3a9ba" stroke-width="0.9"/><rect x="11.5" y="3" width="7.5" height="2.2" fill="#b9bdd6"/><path d="M0.8 8 V17 M0.8 10 H4 M0.8 16 H4" stroke="#bdbdbd" stroke-width="0.9" fill="none"/><circle cx="5.5" cy="10" r="1.6" fill="#fff" stroke="#c4c4c4" stroke-width="0.8"/><circle cx="5.5" cy="16" r="1.6" fill="#fff" stroke="#c4c4c4" stroke-width="0.8"/><path d="M11.2 7 V16.5 M11.2 10 H15.2 M11.2 16 H15.2" stroke="#555" stroke-width="1.4" fill="none"/><circle cx="17" cy="10" r="1.7" fill="#ddd" stroke="#555" stroke-width="1"/><circle cx="17" cy="16" r="1.7" fill="#ddd" stroke="#555" stroke-width="1"/></svg>
<div class="a" style="left:15px;top:638px;width:908px;height:1px;background:#dcdce0"></div>
<div class="a" style="left:15px;top:639px;width:908px;height:25px;background:#f8f6f9"></div>
<div class="a" style="left:15px;top:663px;width:908px;height:1px;background:#c5c5ca"></div>
<div class="a" style="left:15px;top:666px;width:908px;height:1px;background:#c5c5ca"></div>
<div class="t" style="left:18px;top:644px;font-size:16.17px;color:#1e1e1e;transform:scaleX(0.9091);transform-origin:0 0;">( 11 objects )</div>
<div class="a" style="left:15px;top:703px;width:908px;height:2px;background:#a9a9ae"></div>
<div class="a" style="left:39px;top:673px;width:137px;height:30px;background:#e8e8ed;border-top:1px solid #c8c8cd"></div>
<div class="t" style="left:39px;top:682px;font-size:15.84px;color:#363a44;transform:scaleX(0.9091);transform-origin:0 0;">valent Occurrences</div>
<div class="a" style="left:178px;top:673px;width:127px;height:30px;background:#e8e8ed;border-top:1px solid #c8c8cd"></div>
<div class="t" style="left:190.5px;top:682px;font-size:16.83px;color:#363a44;transform:scaleX(0.9091);transform-origin:0 0;">Documentation</div>
<div class="a" style="left:307px;top:673px;width:108px;height:30px;background:#e8e8ed;border-top:1px solid #c8c8cd"></div>
<div class="t" style="left:320px;top:682px;font-size:15.40px;color:#363a44;transform:scaleX(0.9091);transform-origin:0 0;">Process Plan</div>
<div class="a" style="left:417px;top:673px;width:66px;height:30px;background:#e8e8ed;border-top:1px solid #c8c8cd"></div>
<div class="t" style="left:429px;top:682px;font-size:15.95px;color:#363a44;transform:scaleX(0.9091);transform-origin:0 0;">Plants</div>
<div class="a" style="left:485px;top:673px;width:110px;height:30px;background:#e8e8ed;border-top:1px solid #c8c8cd"></div>
<div class="t" style="left:496px;top:682px;font-size:16.39px;color:#363a44;transform:scaleX(0.9091);transform-origin:0 0;">Departments</div>
<div class="a" style="left:597px;top:673px;width:123px;height:30px;background:#e8e8ed;border-top:1px solid #c8c8cd"></div>
<div class="t" style="left:609px;top:682px;font-size:16.28px;color:#363a44;transform:scaleX(0.9091);transform-origin:0 0;">Alternate BOM</div>
<div class="a" style="left:176px;top:674px;width:2px;height:29px;background:#c9c9ce"></div>
<div class="a" style="left:305px;top:674px;width:2px;height:29px;background:#c9c9ce"></div>
<div class="a" style="left:415px;top:674px;width:2px;height:29px;background:#c9c9ce"></div>
<div class="a" style="left:483px;top:674px;width:2px;height:29px;background:#c9c9ce"></div>
<div class="a" style="left:595px;top:674px;width:2px;height:29px;background:#c9c9ce"></div>
<div class="a" style="left:720px;top:671px;width:180px;height:34px;background:#fff;border:1px solid #d0d0d5;border-bottom:none"></div>
<div class="t" style="left:733px;top:681px;font-size:16.61px;color:#111;transform:scaleX(0.9091);transform-origin:0 0;-webkit-text-stroke:0.35px #111">Control Characteristics</div>
<div class="a" style="left:17px;top:676px;width:22px;height:22px;background:#fff;border:1px solid #b9b9be;border-radius:4px"></div>
<svg class="a" style="left:23px;top:681px" width="9" height="12" viewBox="0 0 9 12"><path d="M7 1 L2 6 L7 11" stroke="#222" stroke-width="2" fill="none"/></svg>
<div class="a" style="left:900px;top:676px;width:22px;height:22px;background:#fff;border:1px solid #b9b9be;border-radius:4px"></div>
<svg class="a" style="left:907px;top:681px" width="9" height="12" viewBox="0 0 9 12"><path d="M2 1 L7 6 L2 11" stroke="#222" stroke-width="2" fill="none"/></svg>
<div class="a" style="left:27px;top:707px;width:896px;height:31px;background:#f8f6f9"></div>
<svg class="a" style="left:36px;top:716px" width="21" height="15" viewBox="0 0 21 15"><rect x="0.5" y="0.5" width="20" height="13" fill="#f4f7fb" stroke="#5d7fa6"/><path d="M9.5 1 V13" stroke="#5d7fa6"/><path d="M1 14.5 H20.5" stroke="#9fb3cc"/><circle cx="5" cy="7" r="2.8" fill="none" stroke="#4a4a4a" stroke-width="1"/><path d="M1 7 H9 M5 2.5 V11.5" stroke="#4a4a4a" stroke-width="1"/><rect x="11.5" y="10" width="1.6" height="1.6" fill="#444"/><path d="M14.5 4.5 L16.3 3.2 V12 M14.8 12 H18" stroke="#444" stroke-width="1.1" fill="none"/></svg>
<svg class="a" style="left:69px;top:716px" width="21" height="15" viewBox="0 0 21 15"><rect x="0.5" y="0.5" width="20" height="13" fill="#f4f7fb" stroke="#5d7fa6"/><path d="M9.5 1 V13" stroke="#5d7fa6"/><path d="M1 14.5 H20.5" stroke="#9fb3cc"/><circle cx="5" cy="7" r="2.8" fill="none" stroke="#4a4a4a" stroke-width="1"/><path d="M1 7 H9 M5 2.5 V11.5" stroke="#4a4a4a" stroke-width="1"/><rect x="11.5" y="10" width="1.6" height="1.6" fill="#444"/><path d="M14.5 4.5 L16.3 3.2 V12 M14.8 12 H18" stroke="#444" stroke-width="1.1" fill="none"/></svg>
<svg class="a" style="left:69px;top:709px" width="10" height="10" viewBox="0 0 10 10"><g stroke="#f07a2b" stroke-width="1.3"><path d="M5 0.5 V3.5 M5 6.5 V9.5 M0.5 5 H3.5 M6.5 5 H9.5 M1.8 1.8 L3.7 3.7 M6.3 6.3 L8.2 8.2 M8.2 1.8 L6.3 3.7 M3.7 6.3 L1.8 8.2"/></g></svg>
<div class="a" style="left:104px;top:718px;width:15px;height:6px;background:#e7707c;border-radius:1px"></div>
<svg class="a" style="left:134px;top:711px" width="21" height="20" viewBox="0 0 21 20"><rect x="0.5" y="0.5" width="11" height="14" fill="#fafafa" stroke="#c9c9c9"/><rect x="8.5" y="5.5" width="11" height="14" fill="#f5f5f5" stroke="#bdbdbd"/></svg>
<svg class="a" style="left:166px;top:711px" width="21" height="20" viewBox="0 0 21 20"><rect x="0.5" y="1.5" width="13" height="15" rx="1.5" fill="#f7deb0" stroke="#b38a4a"/><rect x="4" y="0" width="6" height="3" fill="#a67c3c"/><rect x="9.5" y="6.5" width="10" height="13" fill="#fafafa" stroke="#8a8a8a"/></svg>
<svg class="a" style="left:199px;top:711px" width="21" height="21" viewBox="0 0 21 21"><rect x="0.5" y="0.5" width="20" height="13" fill="#eef1f6" stroke="#b0b8c4"/><circle cx="6" cy="7" r="2.6" fill="none" stroke="#aaa"/><path d="M2 7 H10 M6 3 V11" stroke="#aaa"/><circle cx="4" cy="17" r="2" fill="none" stroke="#aaa" stroke-width="1.2"/><circle cx="8" cy="17" r="2" fill="none" stroke="#aaa" stroke-width="1.2"/><path d="M14 20 V14 L12 16 M14 14 L16 16" stroke="#999" stroke-width="1.2" fill="none"/></svg>
<svg class="a" style="left:231px;top:712px" width="21" height="20" viewBox="0 0 21 20"><rect x="0.5" y="4.5" width="13" height="14" fill="#e6e17a" stroke="#b8b34a"/><rect x="5.5" y="1.5" width="14" height="14" fill="#f5ef3a" stroke="#b8b34a"/><path d="M13 1 H20 V8 Z" fill="#2f6fb8"/></svg>
<svg class="a" style="left:849px;top:712px" width="19" height="16" viewBox="0 0 19 16"><circle cx="12" cy="6" r="5" fill="#d8ebfb" stroke="#3e73b6" stroke-width="1.6"/><path d="M8 9.5 L1.5 14.5" stroke="#3e73b6" stroke-width="3" stroke-linecap="round"/></svg>
<svg class="a" style="left:879px;top:711px" width="20" height="20" viewBox="0 0 20 20"><rect x="0.5" y="0.5" width="19" height="19" fill="#dce9f7" stroke="#6a7f96"/><rect x="9" y="1" width="5" height="18" fill="#8fbfe0"/><rect x="1" y="11" width="18" height="4" fill="#6fb7e6"/><line x1="1" y1="5" x2="19" y2="5" stroke="#b6c9dc" stroke-width="0.8"/><line x1="1" y1="9" x2="19" y2="9" stroke="#b6c9dc" stroke-width="0.8"/><line x1="1" y1="13" x2="19" y2="13" stroke="#b6c9dc" stroke-width="0.8"/><line x1="1" y1="16" x2="19" y2="16" stroke="#b6c9dc" stroke-width="0.8"/><line x1="4" y1="1" x2="4" y2="19" stroke="#7f97ad" stroke-width="0.8"/><line x1="9" y1="1" x2="9" y2="19" stroke="#7f97ad" stroke-width="0.8"/><line x1="14" y1="1" x2="14" y2="19" stroke="#7f97ad" stroke-width="0.8"/></svg>
<svg class="a" style="left:904px;top:720px" width="7" height="4" viewBox="0 0 7 4"><path d="M0 0H7L3.5 4Z" fill="#111"/></svg>
<div class="a" style="left:27px;top:738px;width:896px;height:28px;background:#fff"></div>
<div class="a" style="left:27px;top:762px;width:896px;height:3px;background:#bdbdc2"></div>
<div class="a" style="left:64px;top:740px;width:1px;height:25px;background:#d2d2d6"></div>
<div class="a" style="left:64px;top:762px;width:1px;height:3px;background:#fff"></div>
<div class="a" style="left:191px;top:740px;width:1px;height:25px;background:#d2d2d6"></div>
<div class="a" style="left:191px;top:762px;width:1px;height:3px;background:#fff"></div>
<div class="a" style="left:293px;top:740px;width:1px;height:25px;background:#d2d2d6"></div>
<div class="a" style="left:293px;top:762px;width:1px;height:3px;background:#fff"></div>
<div class="a" style="left:370px;top:740px;width:1px;height:25px;background:#d2d2d6"></div>
<div class="a" style="left:370px;top:762px;width:1px;height:3px;background:#fff"></div>
<div class="a" style="left:446px;top:740px;width:1px;height:25px;background:#d2d2d6"></div>
<div class="a" style="left:446px;top:762px;width:1px;height:3px;background:#fff"></div>
<div class="a" style="left:638px;top:740px;width:1px;height:25px;background:#d2d2d6"></div>
<div class="a" style="left:638px;top:762px;width:1px;height:3px;background:#fff"></div>
<div class="a" style="left:893px;top:740px;width:1px;height:25px;background:#d2d2d6"></div>
<div class="a" style="left:893px;top:762px;width:1px;height:3px;background:#fff"></div>
<div class="t" style="left:71px;top:745px;font-size:16.17px;color:#1e1e1e;transform:scaleX(0.9091);transform-origin:0 0;">Name</div>
<svg class="a" style="left:115px;top:753px" width="9" height="5" viewBox="0 0 9 5"><path d="M0 5 L4.5 0 L9 5Z" fill="#6a93d6"/></svg>
<div class="t" style="left:198px;top:745px;font-size:16.83px;color:#1e1e1e;transform:scaleX(0.9091);transform-origin:0 0;">Number</div>
<div class="t" style="left:300px;top:745px;font-size:15.95px;color:#1e1e1e;transform:scaleX(0.9091);transform-origin:0 0;">Severity</div>
<div class="t" style="left:377px;top:745px;font-size:15.73px;color:#1e1e1e;transform:scaleX(0.9091);transform-origin:0 0;">Descript...</div>
<div class="t" style="left:453px;top:745px;font-size:16.06px;color:#1e1e1e;transform:scaleX(0.9091);transform-origin:0 0;">Model Item Graphical Re...</div>
<div class="t" style="left:644px;top:745px;font-size:15.95px;color:#1e1e1e;transform:scaleX(0.9091);transform-origin:0 0;">Version</div>
<div class="t" style="left:901px;top:745px;font-size:15.95px;color:#1e1e1e;transform:scaleX(0.9091);transform-origin:0 0;">Cor</div>
<div class="a" style="left:27px;top:794px;width:896px;height:1px;background:#f0f0f2"></div>
<svg class="a" style="left:35px;top:778px" width="21" height="15" viewBox="0 0 21 15"><rect x="0.5" y="0.5" width="20" height="13" fill="#f4f7fb" stroke="#5d7fa6"/><path d="M9.5 1 V13" stroke="#5d7fa6"/><path d="M1 14.5 H20.5" stroke="#9fb3cc"/><circle cx="5" cy="7" r="2.8" fill="none" stroke="#4a4a4a" stroke-width="1"/><path d="M1 7 H9 M5 2.5 V11.5" stroke="#4a4a4a" stroke-width="1"/><rect x="11.5" y="10" width="1.6" height="1.6" fill="#444"/><path d="M14.5 4.5 L16.3 3.2 V12 M14.8 12 H18" stroke="#444" stroke-width="1.1" fill="none"/></svg>
<div class="t" style="left:75px;top:775px;font-size:14.63px;color:#1e1e1e;transform:scaleX(0.9091);transform-origin:0 0;width:129.8px;overflow:hidden;">AE_GTOL0</div>
<div class="t" style="left:202px;top:775px;font-size:16.06px;color:#1e1e1e;transform:scaleX(0.9091);transform-origin:0 0;">0000000023</div>
<div class="a" style="left:297px;top:767px;width:78px;height:29px;border:1px solid #b0b0b6;background:#fff"></div>
<div class="a" style="left:374px;top:767px;width:78px;height:29px;border:1px solid #b0b0b6;background:#fff"></div>
<div class="t" style="left:305px;top:775px;font-size:15.18px;color:#1e1e1e;transform:scaleX(0.9091);transform-origin:0 0;">Key</div>
<div class="t" style="left:650px;top:775px;font-size:14.96px;color:#1e1e1e;transform:scaleX(0.9091);transform-origin:0 0;">A.1</div>
<div class="t" style="left:902px;top:775px;font-size:15.95px;color:#2f6bb5;transform:scaleX(0.9091);transform-origin:0 0;width:23.1px;overflow:hidden;">Cha</div>
<div class="a" style="left:27px;top:823px;width:896px;height:1px;background:#f0f0f2"></div>
<svg class="a" style="left:35px;top:807px" width="21" height="15" viewBox="0 0 21 15"><rect x="0.5" y="0.5" width="20" height="13" fill="#f4f7fb" stroke="#5d7fa6"/><path d="M9.5 1 V13" stroke="#5d7fa6"/><path d="M1 14.5 H20.5" stroke="#9fb3cc"/><circle cx="5" cy="7" r="2.8" fill="none" stroke="#4a4a4a" stroke-width="1"/><path d="M1 7 H9 M5 2.5 V11.5" stroke="#4a4a4a" stroke-width="1"/><rect x="11.5" y="10" width="1.6" height="1.6" fill="#444"/><path d="M14.5 4.5 L16.3 3.2 V12 M14.8 12 H18" stroke="#444" stroke-width="1.1" fill="none"/></svg>
<div class="t" style="left:75px;top:803px;font-size:14.63px;color:#1e1e1e;transform:scaleX(0.9091);transform-origin:0 0;width:129.8px;overflow:hidden;">AE_SET_DATUM_T</div>
<div class="t" style="left:202px;top:803px;font-size:16.06px;color:#1e1e1e;transform:scaleX(0.9091);transform-origin:0 0;">0000000024</div>
<div class="a" style="left:297px;top:796px;width:78px;height:29px;border:1px solid #b0b0b6;background:#fff"></div>
<div class="a" style="left:374px;top:796px;width:78px;height:29px;border:1px solid #b0b0b6;background:#fff"></div>
<div class="t" style="left:305px;top:803px;font-size:15.18px;color:#1e1e1e;transform:scaleX(0.9091);transform-origin:0 0;">Key</div>
<div class="t" style="left:650px;top:803px;font-size:14.96px;color:#1e1e1e;transform:scaleX(0.9091);transform-origin:0 0;">A.1</div>
<div class="t" style="left:902px;top:803px;font-size:15.95px;color:#2f6bb5;transform:scaleX(0.9091);transform-origin:0 0;width:23.1px;overflow:hidden;">Cha</div>
<div class="a" style="left:459px;top:770px;width:120px;height:25px;border:2px solid #111;background:#fff"></div>
<div class="a" style="left:484px;top:771px;width:2px;height:23px;background:#111"></div>
<svg class="a" style="left:462px;top:773px" width="20" height="19" viewBox="0 0 20 19"><circle cx="10" cy="9.5" r="6.5" fill="none" stroke="#222" stroke-width="1.4"/><path d="M1 9.5 H19 M10 1 V18" stroke="#222" stroke-width="1.4"/></svg>
<div class="t" style="left:493px;top:775px;font-size:16.83px;color:#1e1e1e;transform:scaleX(0.9091);transform-origin:0 0;">.0000508 m</div>
<svg class="a" style="left:459px;top:798px" width="20" height="25" viewBox="0 0 20 25"><rect x="1" y="1" width="18" height="10" fill="#fff" stroke="#222" stroke-width="1.4"/><text x="10" y="9.5" font-size="9" font-family="Liberation Sans" text-anchor="middle" fill="#222">A</text><path d="M10 11 V17 M5 15 H15 M10 17 L5 23.5 H15 Z" stroke="#222" stroke-width="1.3" fill="none"/></svg>
<div class="a" style="left:27px;top:981px;width:896px;height:15px;background:#f5f5f7"></div>
<div class="a" style="left:43px;top:983px;width:729px;height:13px;background:#c2c1c6"></div>
<svg class="a" style="left:31px;top:985px" width="6" height="8" viewBox="0 0 6 8"><path d="M5 0 V8 L0 4Z" fill="#a0a0a5"/></svg>
<svg class="a" style="left:912px;top:985px" width="6" height="8" viewBox="0 0 6 8"><path d="M0 0 V8 L5 4Z" fill="#333"/></svg>
<div class="a" style="left:27px;top:996px;width:896px;height:32px;background:#f8f6f9"></div>
<div class="t" style="left:786px;top:1003px;font-size:16.50px;color:#1e1e1e;transform:scaleX(0.9091);transform-origin:0 0;">Displaying 1 - 2 of 2</div>
<div class="a" style="left:26px;top:1028px;width:898px;height:2px;background:#bdbdc2"></div>
<div class="a" style="left:14px;top:1030px;width:911px;height:1px;background:#b4b4b8"></div>
<div class="a" style="left:926px;top:66px;width:1px;height:966px;background:#a8a8ac"></div>
<div class="a" style="left:983px;top:66px;width:1px;height:966px;background:#a8a8ac"></div>
<svg class="a" style="left:943px;top:139px" width="28" height="30" viewBox="0 0 28 30"><circle cx="3.8" cy="7.6" r="2.4" fill="#5a9a5a" stroke="#1f6a25" stroke-width="1.3"/><circle cx="15.8" cy="3.8" r="2.4" fill="#5a9a5a" stroke="#1f6a25" stroke-width="1.3"/><path d="M3.8 10 V24 M3.8 13.5 H6.5 M3.8 18 H6.5 M3.8 21.5 H6.5 M15.8 6 V15 M15.8 10 H18 M15.8 14 H18" stroke="#2f9a3a" stroke-width="1.4" fill="none"/><path d="M8 13.5 H12 M8 18 H11 M8 21.5 H11 M19.5 10 H24.5" stroke="#3a7a3a" stroke-width="1.3" stroke-dasharray="2 1"/><circle cx="22.5" cy="14" r="1.5" fill="none" stroke="#2a5a2a" stroke-width="1.1"/><path d="M12.5 17.5 H26.5 L21.5 22.5 V29.5 H17.5 V22.5 Z" fill="#ececee" stroke="#8a8a8e" stroke-width="1.1"/></svg>
<svg class="a" style="left:943px;top:187px" width="28" height="30" viewBox="0 0 28 30"><circle cx="3.3" cy="7.5" r="2.5" fill="#9a9a9a" stroke="#555" stroke-width="1"/><circle cx="16" cy="3.4" r="2.5" fill="#9a9a9a" stroke="#555" stroke-width="1"/><path d="M3.3 10 V24.5 M16 6 V10" stroke="#555" stroke-width="1.2"/><path d="M17 10.5 H25 M21 15 H25 M21 18.5 H25" stroke="#666" stroke-width="1.1" stroke-dasharray="2 1"/><circle cx="13.3" cy="18" r="6" fill="#eef4fa" stroke="#2d6292" stroke-width="2.4"/><path d="M17.5 22.5 L24.5 28.5" stroke="#2d6292" stroke-width="3.4" stroke-linecap="round"/></svg>
<svg class="a" style="left:943px;top:235px" width="28" height="30" viewBox="0 0 28 30"><rect x="1" y="1" width="24" height="26" fill="#f3f3f5" stroke="#888" stroke-width="1.4"/><path d="M5 6 H6.5 M9 6 H22 M5 11 H6.5 M9 11 H22 M5 16 H6.5 M9 16 H15 M5 21 H6.5 M9 21 H12" stroke="#777" stroke-width="1.6"/><path d="M13 24 L21 16 A4 4 0 1 1 25 20 L17 28" stroke="#2a6bb0" stroke-width="3.4" fill="none"/></svg>
<svg class="a" style="left:943px;top:283px" width="20" height="20" viewBox="0 0 20 20"><path d="M5 3 H13" stroke="#4b86c9" stroke-width="1.5"/><path d="M2 7 H9" stroke="#3aa04a" stroke-width="1.5"/><path d="M5 8 V18 M2 15 L5 18.5 L8 15 M12 18 V4 M9 7 L12 3.5 L15 7" stroke="#222" stroke-width="1.6" fill="none"/><circle cx="17" cy="10" r="1.5" fill="none" stroke="#666"/><circle cx="17" cy="15" r="1.5" fill="none" stroke="#666"/><path d="M12 10 H15.5 M12 15 H15.5" stroke="#666"/></svg>
<svg class="a" style="left:948px;top:368px" width="21" height="23" viewBox="0 0 21 23"><path d="M10 3.2 A8 8 0 1 1 2.4 13.5" stroke="#1f5aa6" stroke-width="2.6" fill="none"/><path d="M0.5 6.5 L8.5 1 L8.5 9.5 Z" fill="#1f5aa6"/><rect x="13" y="15.5" width="8" height="2.6" fill="#111"/><rect x="13" y="19.4" width="8" height="2.6" fill="#111"/></svg>
<svg class="a" style="left:948px;top:407px" width="21" height="21" viewBox="0 0 21 21"><path d="M5 3 H11 M3 6 L5 3 L3 1" stroke="#8fb0d9" stroke-width="1.2" fill="none"/><path d="M2 10 H10 M2 13 H10" stroke="#aaa" stroke-width="1.6"/><path d="M13 4 V18 M10 15 L13 18.5 L16 15" stroke="#aaa" stroke-width="1.5" fill="none"/><circle cx="19" cy="3" r="1.5" fill="none" stroke="#9fb4d0"/><circle cx="19" cy="9" r="1.5" fill="none" stroke="#9fb4d0"/><circle cx="19" cy="15" r="1.5" fill="none" stroke="#9fb4d0"/></svg>
<svg class="a" style="left:947px;top:447px" width="22" height="15" viewBox="0 0 22 15"><ellipse cx="6.5" cy="7.5" rx="6" ry="6.3" fill="#2f9a3a"/><ellipse cx="14.5" cy="7.5" rx="6" ry="6.3" fill="#2d5b8c"/><path d="M10.5 2.6 Q13 7.5 10.5 12.4 Q8 7.5 10.5 2.6Z" fill="#fff"/></svg>
<svg class="a" style="left:947px;top:481px" width="21" height="21" viewBox="0 0 21 21"><circle cx="5" cy="5" r="4.5" fill="#3a3a3a"/><path d="M5 9 V13 H16 V8 M5 13 V15" stroke="#3a3a3a" stroke-width="1.4" fill="none"/><rect x="14" y="1" width="6" height="8" fill="#5aa7e6" stroke="#2f6fb0" stroke-width="0.8"/><rect x="1" y="14" width="7" height="6" fill="#f39a1e" stroke="#b36a00" stroke-width="0.8"/><rect x="12" y="12" width="8" height="8" fill="#9ad232" stroke="#5b8f10" stroke-width="0.8"/></svg>
<svg class="a" style="left:948px;top:520px" width="21" height="21" viewBox="0 0 21 21"><path d="M7 0 L2 9 H6 L3 16 L10 6 H6 L9 0Z" fill="#f2c21a" stroke="#a07a10" stroke-width="0.6"/><path d="M12 5 V19 M9 16 L12 19.5 L15 16" stroke="#222" stroke-width="1.5" fill="none"/><circle cx="18" cy="6" r="1.5" fill="none" stroke="#666"/><circle cx="18" cy="11" r="1.5" fill="none" stroke="#666"/><circle cx="18" cy="16" r="1.5" fill="none" stroke="#666"/></svg>
<svg class="a" style="left:948px;top:555px" width="21" height="24" viewBox="0 0 21 24"><path d="M7 0 L2 9 H6 L3 16 L10 6 H6 L9 0Z" fill="#f2c21a" stroke="#a07a10" stroke-width="0.6"/><path d="M12 4 V18 M7 15 L12 23 L17 15 Z" stroke="#222" stroke-width="1.5" fill="#333"/><circle cx="18" cy="5" r="1.5" fill="none" stroke="#666"/><circle cx="18" cy="10" r="1.5" fill="none" stroke="#666"/></svg>
<svg class="a" style="left:947px;top:596px" width="22" height="21" viewBox="0 0 22 21"><g stroke="#f08a3a" stroke-width="1.2"><path d="M4 0.5 V3 M4 5 V7.5 M0.5 4 H3 M5 4 H7.5 M1.5 1.5 L3 3 M5 5 L6.5 6.5 M6.5 1.5 L5 3 M3 5 L1.5 6.5"/></g><circle cx="9" cy="12" r="6" fill="#e0e0e2" stroke="#b5b5b8" stroke-width="1.6" stroke-dasharray="2 1.3"/><circle cx="9" cy="12" r="2.1" fill="#fff" stroke="#b5b5b8"/><path d="M12 14 H21 M12 18 H21" stroke="#888" stroke-width="1.6"/></svg>
<svg class="a" style="left:947px;top:632px" width="22" height="20" viewBox="0 0 22 20"><g stroke="#f08a3a" stroke-width="1.2"><path d="M4 0.5 V3 M4 5 V7.5 M0.5 4 H3 M5 4 H7.5 M1.5 1.5 L3 3 M5 5 L6.5 6.5 M6.5 1.5 L5 3 M3 5 L1.5 6.5"/></g><path d="M1 12 H8 M1 16 H8" stroke="#888" stroke-width="1.6"/><rect x="12" y="2" width="8" height="3" fill="#9fb4d0" stroke="#5f7fa8" stroke-width="0.6"/><rect x="12" y="7" width="8" height="3" fill="#9fb4d0" stroke="#5f7fa8" stroke-width="0.6"/><circle cx="14" cy="15" r="2" fill="none" stroke="#5f7fa8"/><circle cx="18" cy="15" r="2" fill="none" stroke="#5f7fa8"/></svg>
<svg class="a" style="left:947px;top:680px" width="22" height="21" viewBox="0 0 22 21"><path d="M4 4 H12 M9 2 L12 4 L9 6 M15 8 H7 M10 6 L7 8 L10 10" stroke="#3e6ea5" stroke-width="1.2" fill="none"/><circle cx="7" cy="13" r="5.5" fill="#e0e0e2" stroke="#b5b5b8" stroke-width="1.6" stroke-dasharray="2 1.3"/><circle cx="7" cy="13" r="1.9" fill="#fff" stroke="#b5b5b8"/><circle cx="15" cy="12" r="5.5" fill="#e0e0e2" stroke="#a9b8cf" stroke-width="1.6" stroke-dasharray="2 1.3"/><circle cx="15" cy="12" r="1.9" fill="#fff" stroke="#a9b8cf"/><text x="14" y="21" font-size="7" font-family="Liberation Sans" fill="#333">+3</text></svg>
<svg class="a" style="left:947px;top:715px" width="22" height="21" viewBox="0 0 22 21"><path d="M4 4 H12 M9 2 L12 4 L9 6 M15 8 H7 M10 6 L7 8 L10 10" stroke="#3e6ea5" stroke-width="1.2" fill="none"/><path d="M11 8 V20 M5 11 L17 17 M5 17 L17 11" stroke="#b0b0b3" stroke-width="1.4"/></svg>
<svg class="a" style="left:947px;top:754px" width="22" height="22" viewBox="0 0 22 22"><path d="M4 4 H12 M9 2 L12 4 L9 6 M15 8 H7 M10 6 L7 8 L10 10" stroke="#3e6ea5" stroke-width="1.2" fill="none"/><path d="M5 10 V15 H20" stroke="#999" stroke-width="1.3" fill="none"/><rect x="8" y="16" width="12" height="2.4" fill="#6f8fb8"/><rect x="8" y="19.5" width="12" height="2.4" fill="#6f8fb8"/></svg>
<svg class="a" style="left:947px;top:791px" width="21" height="21" viewBox="0 0 21 21"><circle cx="4" cy="3" r="2.3" fill="none" stroke="#444" stroke-width="1.3"/><path d="M4 5.5 V20 H9 M4 10 H9 M4 15 H9" stroke="#444" stroke-width="1.5" fill="none"/><rect x="10" y="4" width="10" height="4" fill="#2d5f9e"/><rect x="10" y="9.5" width="10" height="4" fill="#2d5f9e"/><rect x="10" y="15" width="10" height="4" fill="#2d5f9e"/></svg>
<svg class="a" style="left:947px;top:828px" width="22" height="21" viewBox="0 0 22 21"><g stroke="#f08a3a" stroke-width="1.2"><path d="M4 0.5 V3 M4 5 V7.5 M0.5 4 H3 M5 4 H7.5 M1.5 1.5 L3 3 M5 5 L6.5 6.5 M6.5 1.5 L5 3 M3 5 L1.5 6.5"/></g><circle cx="8" cy="15" r="5.5" fill="#e0e0e2" stroke="#b5b5b8" stroke-width="1.6" stroke-dasharray="2 1.3"/><circle cx="8" cy="15" r="1.9" fill="#fff" stroke="#b5b5b8"/><circle cx="14" cy="12" r="5.5" fill="#e0e0e2" stroke="#a9b8cf" stroke-width="1.6" stroke-dasharray="2 1.3"/><circle cx="14" cy="12" r="1.9" fill="#fff" stroke="#a9b8cf"/><path d="M16 3 L20 7 L16 11" stroke="#6f8fb8" stroke-width="2" fill="none"/></svg>
<svg class="a" style="left:947px;top:865px" width="22" height="21" viewBox="0 0 22 21"><g stroke="#f08a3a" stroke-width="1.2"><path d="M4 0.5 V3 M4 5 V7.5 M0.5 4 H3 M5 4 H7.5 M1.5 1.5 L3 3 M5 5 L6.5 6.5 M6.5 1.5 L5 3 M3 5 L1.5 6.5"/></g><circle cx="9" cy="13" r="6" fill="#e0e0e2" stroke="#b5b5b8" stroke-width="1.6" stroke-dasharray="2 1.3"/><circle cx="9" cy="13" r="2.1" fill="#fff" stroke="#b5b5b8"/><circle cx="15" cy="15" r="5.5" fill="#e0e0e2" stroke="#b5b5b8" stroke-width="1.6" stroke-dasharray="2 1.3"/><circle cx="15" cy="15" r="1.9" fill="#fff" stroke="#b5b5b8"/></svg>
<svg class="a" style="left:947px;top:904px" width="22" height="21" viewBox="0 0 22 21"><circle cx="7" cy="6" r="5.5" fill="#e0e0e2" stroke="#b5b5b8" stroke-width="1.6" stroke-dasharray="2 1.3"/><circle cx="7" cy="6" r="1.9" fill="#fff" stroke="#b5b5b8"/><circle cx="14" cy="15" r="5.5" fill="#e0e0e2" stroke="#b5b5b8" stroke-width="1.6" stroke-dasharray="2 1.3"/><circle cx="14" cy="15" r="1.9" fill="#fff" stroke="#b5b5b8"/><path d="M11 13 H19 M15 9 V17" stroke="#2aa84a" stroke-width="2.6"/></svg>
<div class="a" style="left:983px;top:66px;width:927px;height:966px;border:1px solid #b4b4b8;border-bottom:none;background:#fff"></div>
<div class="a" style="left:984px;top:67px;width:925px;height:31px;background:#f8f6f9"></div>
<div class="a" style="left:984px;top:97px;width:925px;height:1px;background:#c5c5ca"></div>
<div class="a" style="left:984px;top:133px;width:925px;height:1px;background:#c5c5ca"></div>
<div class="a" style="left:984px;top:135px;width:925px;height:1px;background:#c5c5ca"></div>
<div class="a" style="left:984px;top:136px;width:925px;height:30px;background:#f8f6f9"></div>
<div class="a" style="left:984px;top:166px;width:925px;height:2px;background:#bdbdc2"></div>
<svg class="a" style="left:994px;top:71px" width="21" height="21" viewBox="0 0 21 21"><path d="M1 20 L2.5 14 L14.5 2 L19 6.5 L7 18.5 Z" fill="#f2cd52" stroke="#a87f1e" stroke-width="1"/><path d="M14.5 2 L16 0.6 Q17.3 -0.2 18.8 1.2 Q20.6 3 19.8 4.4 L19 6.5 Z" fill="#c43a2a" stroke="#8a2a1e" stroke-width="0.6"/><path d="M1 20 L1.8 16.6 L4.4 19.2 Z" fill="#2b2b2b"/><path d="M4 15.5 L15.5 4" stroke="#fff1a8" stroke-width="1.4"/><path d="M6.5 18 L18 6.5" stroke="#c99a2a" stroke-width="1"/></svg>
<svg class="a" style="left:1018px;top:80px" width="7" height="4" viewBox="0 0 7 4"><path d="M0 0H7L3.5 4Z" fill="#111"/></svg>
<svg class="a" style="left:1041px;top:71px" width="20" height="20" viewBox="0 0 20 20"><rect x="0.5" y="0.5" width="19" height="19" fill="#fff" stroke="#6f6f75"/><path d="M11 -1 H21 V9 Z" fill="#f7f6f9"/><path d="M12 0 H20 V8 Z" fill="#3b84c6"/><path d="M-1 11 V21 H9 Z" fill="#f7f6f9"/><path d="M0 12 V20 H8 Z" fill="#3cbf62"/></svg>
<svg class="a" style="left:1066px;top:80px" width="7" height="4" viewBox="0 0 7 4"><path d="M0 0H7L3.5 4Z" fill="#111"/></svg>
<svg class="a" style="left:1089px;top:71px" width="18" height="20" viewBox="0 0 18 20"><rect x="0.5" y="2.5" width="16" height="17" rx="2" fill="#f7deb0" stroke="#b38a4a"/><rect x="5" y="0.5" width="7" height="4" rx="1" fill="#c79a55"/><rect x="2" y="5" width="13" height="13" fill="#fbe8c4"/></svg>
<svg class="a" style="left:1114px;top:80px" width="7" height="4" viewBox="0 0 7 4"><path d="M0 0H7L3.5 4Z" fill="#111"/></svg>
<svg class="a" style="left:1138px;top:71px" width="15" height="20" viewBox="0 0 15 20"><path d="M12 0 L1 10 L12 20 L14 19 L5 10 L14 1Z" fill="#2a2a30"/><path d="M8 5 Q14 10 8 15 Q6 10 8 5Z" fill="#2e6bb7"/></svg>
<svg class="a" style="left:1161px;top:80px" width="7" height="4" viewBox="0 0 7 4"><path d="M0 0H7L3.5 4Z" fill="#111"/></svg>
<svg class="a" style="left:1187px;top:74px" width="16" height="16" viewBox="0 0 16 16"><line x1="11.0" y1="8.0" x2="16.0" y2="8.0" stroke="#f07a2b" stroke-width="1.8"/><line x1="10.1" y1="10.1" x2="13.7" y2="13.7" stroke="#f07a2b" stroke-width="1.8"/><line x1="8.0" y1="11.0" x2="8.0" y2="16.0" stroke="#f07a2b" stroke-width="1.8"/><line x1="5.9" y1="10.1" x2="2.3" y2="13.7" stroke="#f07a2b" stroke-width="1.8"/><line x1="5.0" y1="8.0" x2="0.0" y2="8.0" stroke="#f07a2b" stroke-width="1.8"/><line x1="5.9" y1="5.9" x2="2.3" y2="2.3" stroke="#f07a2b" stroke-width="1.8"/><line x1="8.0" y1="5.0" x2="8.0" y2="0.0" stroke="#f07a2b" stroke-width="1.8"/><line x1="10.1" y1="5.9" x2="13.7" y2="2.3" stroke="#f07a2b" stroke-width="1.8"/></svg>
<svg class="a" style="left:1209px;top:80px" width="7" height="4" viewBox="0 0 7 4"><path d="M0 0H7L3.5 4Z" fill="#111"/></svg>
<svg class="a" style="left:1231px;top:74px" width="20" height="17" viewBox="0 0 20 17"><path d="M0.5 1 L19.5 1 L12 9 V16 H8 V9 Z" fill="#e9e9ec" stroke="#7c7c82" stroke-width="1.2"/><path d="M3 2.5 H17" stroke="#9a9aa0"/></svg>
<svg class="a" style="left:1256px;top:80px" width="7" height="4" viewBox="0 0 7 4"><path d="M0 0H7L3.5 4Z" fill="#111"/></svg>
<svg class="a" style="left:1279px;top:71px" width="20" height="20" viewBox="0 0 20 20"><path d="M0 1 H10 V5 H7 V19 H4 V5 H0 Z" fill="#d9b055" stroke="#8b6a2c" stroke-width="0.8"/><rect x="0" y="0.5" width="10" height="4" fill="#8d8d93"/><rect x="15" y="0" width="2" height="8" fill="#8d8d93"/><rect x="14" y="8" width="4" height="12" rx="1" fill="#d9b055" stroke="#8b6a2c" stroke-width="0.8"/></svg>
<svg class="a" style="left:1304px;top:80px" width="7" height="4" viewBox="0 0 7 4"><path d="M0 0H7L3.5 4Z" fill="#111"/></svg>
<div class="a" style="left:1326px;top:71px;width:20px;height:20px;background:#c4c9d0"></div>
<svg class="a" style="left:1326px;top:73px" width="20" height="17" viewBox="0 0 20 17"><path d="M3 9 Q4 2 12 3 L12 0 L17 5 L11 9 L11 6 Q7 5 6 9Z" fill="#6f9bd0"/><path d="M17 8 Q16 15 8 14 L8 17 L3 12 L9 8 L9 11 Q13 12 14 8Z" fill="#6f9bd0"/></svg>
<svg class="a" style="left:1354px;top:80px" width="7" height="4" viewBox="0 0 7 4"><path d="M0 0H7L3.5 4Z" fill="#999"/></svg>
<svg class="a" style="left:1806px;top:71px" width="20" height="20" viewBox="0 0 20 20"><rect x="0.5" y="0.5" width="19" height="19" fill="#dce9f7" stroke="#6a7f96"/><rect x="9" y="1" width="5" height="18" fill="#8fbfe0"/><rect x="1" y="11" width="18" height="4" fill="#6fb7e6"/><line x1="1" y1="5" x2="19" y2="5" stroke="#b6c9dc" stroke-width="0.8"/><line x1="1" y1="9" x2="19" y2="9" stroke="#b6c9dc" stroke-width="0.8"/><line x1="1" y1="13" x2="19" y2="13" stroke="#b6c9dc" stroke-width="0.8"/><line x1="1" y1="16" x2="19" y2="16" stroke="#b6c9dc" stroke-width="0.8"/><line x1="4" y1="1" x2="4" y2="19" stroke="#7f97ad" stroke-width="0.8"/><line x1="9" y1="1" x2="9" y2="19" stroke="#7f97ad" stroke-width="0.8"/><line x1="14" y1="1" x2="14" y2="19" stroke="#7f97ad" stroke-width="0.8"/></svg>
<svg class="a" style="left:1831px;top:80px" width="7" height="4" viewBox="0 0 7 4"><path d="M0 0H7L3.5 4Z" fill="#111"/></svg>
<svg class="a" style="left:1851px;top:71px" width="21" height="20" viewBox="0 0 21 20"><rect x="0.5" y="0.5" width="20" height="19" fill="#dfe6f6" stroke="#6f7a8c"/><path d="M5.5 1V19M10.5 1V19M15.5 1V19" stroke="#6f7a8c"/></svg>
<svg class="a" style="left:1881px;top:71px" width="21" height="20" viewBox="0 0 21 20"><rect x="0.5" y="0.5" width="20" height="19" fill="#eceef8" stroke="#a7aab5"/><path d="M10.5 1V19M1 10H20" stroke="#a7aab5"/></svg>
<div class="a" style="left:986px;top:106px;width:209px;height:23px;border:1px solid #c3c3c8;background:#fff"></div>
<div class="t" style="left:989.5px;top:109px;font-size:16.34px;color:#6d6d72;transform:scaleX(0.9091);transform-origin:0 0;">Find in Structure</div>
<svg class="a" style="left:1206px;top:110px" width="15" height="9" viewBox="0 0 15 9"><path d="M1 1 L7.5 7.5 L14 1" stroke="#4a4a4e" stroke-width="2.4" fill="none"/></svg>
<svg class="a" style="left:1236px;top:110px" width="15" height="9" viewBox="0 0 15 9"><path d="M1 8 L7.5 1.5 L14 8" stroke="#4a4a4e" stroke-width="2.4" fill="none"/></svg>
<div class="t" style="left:1270px;top:109px;font-size:15.95px;color:#1e1e1e;transform:scaleX(0.9091);transform-origin:0 0;">All</div>
<svg class="a" style="left:1299px;top:107px" width="21" height="19" viewBox="0 0 21 19"><circle cx="10" cy="6" r="5" fill="#bfe0f5" stroke="#5a94c8" stroke-width="1.3"/><path d="M6.5 9.5 L1 15" stroke="#5a94c8" stroke-width="3" stroke-linecap="round"/><path d="M12 11 V17 H17 M12 13 H17" stroke="#666" stroke-width="1.2" fill="none"/><circle cx="18" cy="6.5" r="1.6" fill="#999"/><circle cx="18" cy="12" r="1.6" fill="#999"/><circle cx="18" cy="17" r="1.6" fill="#999"/></svg>
<svg class="a" style="left:1881px;top:106px" width="21" height="21" viewBox="0 0 21 21"><defs><radialGradient id="hg" cx="0.4" cy="0.35" r="0.7"><stop offset="0" stop-color="#8fb4d8"/><stop offset="1" stop-color="#2f5f93"/></radialGradient></defs><circle cx="10.5" cy="10.5" r="10" fill="url(#hg)" stroke="#2b517c" stroke-width="0.8"/><path d="M7.2 8 Q7.2 4.5 10.6 4.5 Q14 4.5 14 7.6 Q14 9.5 11.8 10.6 Q10.8 11.2 10.8 13" stroke="#fff" stroke-width="2" fill="none"/><rect x="9.6" y="14.6" width="2.4" height="2.4" fill="#fff"/></svg>
<svg class="a" style="left:998px;top:139px" width="21" height="20" viewBox="0 0 21 20"><defs><linearGradient id="fg" x1="0" y1="0" x2="1" y2="0"><stop offset="0" stop-color="#c4c4c6"/><stop offset="1" stop-color="#8e8e92"/></linearGradient></defs><path d="M1 18 V7 H3 V1 H6 V7 H8 V1 H11 V7 H13 V9 H9 L9 18 Z" fill="url(#fg)" stroke="#8a8a8e" stroke-width="0.6"/><rect x="3" y="0" width="3" height="1.6" fill="#8a4a4a"/><rect x="8" y="0" width="3" height="1.6" fill="#8a4a4a"/><path d="M9 10 H20 L16 14 V19.5 H13 V14 Z" fill="#efeff1" stroke="#85858a" stroke-width="0.9"/></svg>
<div class="a" style="left:986px;top:190px;width:921px;height:3px;background:#bdbdc2"></div>
<div class="a" style="left:1760px;top:168px;width:1px;height:25px;background:#d2d2d6"></div>
<div class="a" style="left:1760px;top:190px;width:1px;height:3px;background:#fff"></div>
<div class="a" style="left:1792px;top:168px;width:1px;height:25px;background:#d2d2d6"></div>
<div class="a" style="left:1792px;top:190px;width:1px;height:3px;background:#fff"></div>
<div class="a" style="left:1842px;top:168px;width:1px;height:25px;background:#d2d2d6"></div>
<div class="a" style="left:1842px;top:190px;width:1px;height:3px;background:#fff"></div>
<div class="a" style="left:1874px;top:168px;width:1px;height:25px;background:#d2d2d6"></div>
<div class="a" style="left:1874px;top:190px;width:1px;height:3px;background:#fff"></div>
<div class="a" style="left:1906px;top:168px;width:1px;height:25px;background:#d2d2d6"></div>
<div class="a" style="left:1906px;top:190px;width:1px;height:3px;background:#fff"></div>
<div class="t" style="left:989px;top:174px;font-size:17.05px;color:#1e1e1e;transform:scaleX(0.9091);transform-origin:0 0;">Identity</div>
<svg class="a" style="left:1045px;top:181px" width="9" height="5" viewBox="0 0 9 5"><path d="M0 5 L4.5 0 L9 5Z" fill="#6a93d6"/></svg>
<div class="t" style="left:1766px;top:174px;font-size:14.52px;color:#1e1e1e;transform:scaleX(0.9091);transform-origin:0 0;">Q...</div>
<div class="t" style="left:1798px;top:174px;font-size:16.50px;color:#1e1e1e;transform:scaleX(0.9091);transform-origin:0 0;">Unit</div>
<svg class="a" style="left:1849px;top:171px" width="21" height="21" viewBox="0 0 21 21"><rect x="0" y="0" width="6" height="2.3" fill="#333"/><rect x="0" y="4" width="6" height="2.3" fill="#333"/><path d="M8 0.4 H20" stroke="#a6a6ae" stroke-width="0.8"/><path d="M9.3 0 V19" stroke="#a3a9ba" stroke-width="0.9"/><rect x="11.5" y="3" width="7.5" height="2.2" fill="#b9bdd6"/><polygon points="8.37,12.30 9.63,12.62 9.63,14.38 8.37,14.70 8.09,15.39 8.75,16.50 7.50,17.75 6.39,17.09 5.70,17.37 5.38,18.63 3.62,18.63 3.30,17.37 2.61,17.09 1.50,17.75 0.25,16.50 0.91,15.39 0.63,14.70 -0.63,14.38 -0.63,12.62 0.63,12.30 0.91,11.61 0.25,10.50 1.50,9.25 2.61,9.91 3.30,9.63 3.62,8.37 5.38,8.37 5.70,9.63 6.39,9.91 7.50,9.25 8.75,10.50 8.09,11.61" fill="#f1f1f1" stroke="#c9c9c9" stroke-width="0.9"/><circle cx="4.5" cy="13.5" r="1.6" fill="#fff"/><polygon points="19.17,12.71 20.52,13.05 20.52,14.95 19.17,15.29 18.86,16.04 19.57,17.23 18.23,18.57 17.04,17.86 16.29,18.17 15.95,19.52 14.05,19.52 13.71,18.17 12.96,17.86 11.77,18.57 10.43,17.23 11.14,16.04 10.83,15.29 9.48,14.95 9.48,13.05 10.83,12.71 11.14,11.96 10.43,10.77 11.77,9.43 12.96,10.14 13.71,9.83 14.05,8.48 15.95,8.48 16.29,9.83 17.04,10.14 18.23,9.43 19.57,10.77 18.86,11.96" fill="#b7cbe8" stroke="#6f8fc0" stroke-width="1"/><circle cx="15" cy="14" r="2" fill="#f4f8fd"/></svg>
<svg class="a" style="left:1880px;top:171px" width="21" height="21" viewBox="0 0 21 21"><rect x="0" y="0" width="6" height="2.3" fill="#333"/><rect x="0" y="4" width="6" height="2.3" fill="#333"/><path d="M8 0.4 H20" stroke="#a6a6ae" stroke-width="0.8"/><path d="M9.3 0 V19" stroke="#a3a9ba" stroke-width="0.9"/><rect x="11.5" y="3" width="7.5" height="2.2" fill="#b9bdd6"/><path d="M0.8 8 V17 M0.8 10 H4 M0.8 16 H4" stroke="#bdbdbd" stroke-width="0.9" fill="none"/><circle cx="5.5" cy="10" r="1.6" fill="#fff" stroke="#c4c4c4" stroke-width="0.8"/><circle cx="5.5" cy="16" r="1.6" fill="#fff" stroke="#c4c4c4" stroke-width="0.8"/><path d="M11.2 7 V16.5 M11.2 10 H15.2 M11.2 16 H15.2" stroke="#555" stroke-width="1.4" fill="none"/><circle cx="17" cy="10" r="1.7" fill="#ddd" stroke="#555" stroke-width="1"/><circle cx="17" cy="16" r="1.7" fill="#ddd" stroke="#555" stroke-width="1"/></svg>
<div class="a" style="left:984px;top:638px;width:924px;height:1px;background:#dcdce0"></div>
<div class="a" style="left:984px;top:639px;width:924px;height:24px;background:#f8f6f9"></div>
<div class="a" style="left:984px;top:663px;width:924px;height:2px;background:#c5c5ca"></div>
<div class="t" style="left:987px;top:642px;font-size:16.06px;color:#1e1e1e;transform:scaleX(0.9091);transform-origin:0 0;">( 0 objects )</div>
<div class="a" style="left:986px;top:702px;width:921px;height:2px;background:#d5d5da"></div>
<div class="a" style="left:1111px;top:672px;width:58px;height:30px;background:#f4f3f7;border-top:1px solid #e2e2e6"></div>
<div class="t" style="left:1125px;top:681px;font-size:14.74px;color:#acacb1;transform:scaleX(0.9091);transform-origin:0 0;width:48.4px;overflow:hidden;">Uses</div>
<div class="a" style="left:1171px;top:672px;width:100px;height:30px;background:#f4f3f7;border-top:1px solid #e2e2e6"></div>
<div class="t" style="left:1182px;top:681px;font-size:16.39px;color:#acacb1;transform:scaleX(0.9091);transform-origin:0 0;width:97.9px;overflow:hidden;">Made From</div>
<div class="a" style="left:1273px;top:672px;width:109px;height:30px;background:#f4f3f7;border-top:1px solid #e2e2e6"></div>
<div class="t" style="left:1285px;top:681px;font-size:16.17px;color:#acacb1;transform:scaleX(0.9091);transform-origin:0 0;width:106.7px;overflow:hidden;">Visualization</div>
<div class="a" style="left:1384px;top:672px;width:130px;height:30px;background:#f4f3f7;border-top:1px solid #e2e2e6"></div>
<div class="t" style="left:1396px;top:681px;font-size:15.73px;color:#acacb1;transform:scaleX(0.9091);transform-origin:0 0;width:129.8px;overflow:hidden;">Equivalent Parts</div>
<div class="a" style="left:1516px;top:672px;width:179px;height:30px;background:#f4f3f7;border-top:1px solid #e2e2e6"></div>
<div class="t" style="left:1527px;top:681px;font-size:15.84px;color:#acacb1;transform:scaleX(0.9091);transform-origin:0 0;width:184.8px;overflow:hidden;">Equivalent Occurrences</div>
<div class="a" style="left:1697px;top:672px;width:127px;height:30px;background:#f4f3f7;border-top:1px solid #e2e2e6"></div>
<div class="t" style="left:1708px;top:681px;font-size:16.72px;color:#acacb1;transform:scaleX(0.9091);transform-origin:0 0;width:127.6px;overflow:hidden;">Documentation</div>
<div class="a" style="left:1826px;top:672px;width:60px;height:30px;background:#f4f3f7;border-top:1px solid #e2e2e6"></div>
<div class="t" style="left:1838px;top:681px;font-size:15.95px;color:#acacb1;transform:scaleX(0.9091);transform-origin:0 0;width:52.8px;overflow:hidden;">Process</div>
<div class="a" style="left:1169px;top:673px;width:2px;height:29px;background:#d8d8dd"></div>
<div class="a" style="left:1271px;top:673px;width:2px;height:29px;background:#d8d8dd"></div>
<div class="a" style="left:1382px;top:673px;width:2px;height:29px;background:#d8d8dd"></div>
<div class="a" style="left:1514px;top:673px;width:2px;height:29px;background:#d8d8dd"></div>
<div class="a" style="left:1695px;top:673px;width:2px;height:29px;background:#d8d8dd"></div>
<div class="a" style="left:1824px;top:673px;width:2px;height:29px;background:#d8d8dd"></div>
<div class="a" style="left:1017px;top:670px;width:94px;height:34px;background:#fff;border:1px solid #dedee3;border-bottom:none"></div>
<div class="t" style="left:1029px;top:678px;font-size:17.38px;color:#9d9da2;transform:scaleX(0.9091);transform-origin:0 0;-webkit-text-stroke:0.2px #9d9da2">Attributes</div>
<div class="a" style="left:986px;top:674px;width:22px;height:23px;background:#fff;border:1px solid #d4d4d9;border-radius:4px"></div>
<svg class="a" style="left:992px;top:680px" width="9" height="12" viewBox="0 0 9 12"><path d="M7 1 L2 6 L7 11" stroke="#aaa" stroke-width="2" fill="none"/></svg>
<div class="a" style="left:1885px;top:674px;width:22px;height:23px;background:#fff;border:1px solid #c4c4c9;border-radius:4px"></div>
<svg class="a" style="left:1892px;top:680px" width="9" height="12" viewBox="0 0 9 12"><path d="M2 1 L7 6 L2 11" stroke="#666" stroke-width="2" fill="none"/></svg>
<div class="a" style="left:1907px;top:66px;width:1px;height:962px;background:#d0d0d4"></div>
<div class="a" style="left:984px;top:1028px;width:924px;height:1px;background:#c8c8cc"></div>
<div class="a" style="left:983px;top:1030px;width:927px;height:1px;background:#b4b4b8"></div>
<div class="a" style="left:7px;top:1032px;width:1906px;height:1px;background:#6f737b"></div>
<div class="a" style="left:0px;top:1040px;width:1920px;height:40px;background:#04060a"></div>
<div class="a" style="left:1915px;top:1040px;width:1px;height:40px;background:#55575c"></div>
<svg class="a" style="left:15px;top:1052px" width="17" height="17" viewBox="0 0 17 17"><path d="M0 2.3 L7 1.3 V8 H0Z M8 1.1 L17 0 V8 H8Z M0 9 H7 V15.7 L0 14.7Z M8 9 H17 V17 L8 15.9Z" fill="#fff"/></svg>
<svg class="a" style="left:63px;top:1051px" width="18" height="19" viewBox="0 0 18 19"><circle cx="11" cy="7" r="5.6" fill="none" stroke="#fff" stroke-width="1.5"/><path d="M7 11 L1 18" stroke="#fff" stroke-width="1.7"/></svg>
<svg class="a" style="left:111px;top:1052px" width="18" height="17" viewBox="0 0 18 17"><path d="M0.7 0 V3 H12.3 V0 M0.7 17 V13.5 H12.3 V17 M0.7 3 V13.5 M12.3 3 V13.5" stroke="#fff" stroke-width="1.3" fill="none"/><path d="M15.5 0 V3 M15.5 10 V17" stroke="#fff" stroke-width="1.3"/><rect x="14" y="4.5" width="3" height="3.5" fill="#fff"/></svg>
<svg class="a" style="left:160px;top:1050px" width="22" height="20" viewBox="0 0 22 20"><path d="M0 1 H8 L10 3 H22 V18 H0Z" fill="#e9b73a"/><path d="M0 5 H22 V18 H0Z" fill="#f8d77a"/><path d="M4 18.5 V12 H18 V18.5 H14.5 V15 H7.5 V18.5Z" fill="#3a9ee6"/></svg>
<div class="a" style="left:196px;top:1040px;width:48px;height:40px;background:#2b2b2d"></div>
<div class="a" style="left:196px;top:1078px;width:48px;height:2px;background:#76b9ed"></div>
<svg class="a" style="left:208px;top:1048px" width="24" height="24" viewBox="0 0 24 24"><circle cx="12" cy="12" r="11.5" fill="#db4437"/><path d="M12 12 L22.3 6.5 A11.5 11.5 0 0 1 12 23.5Z" fill="#f4c20d"/><path d="M12 12 L12 23.5 A11.5 11.5 0 0 1 1.7 6.5 Z" fill="#0f9d58"/><circle cx="12" cy="12" r="5.3" fill="#fff"/><circle cx="12" cy="12" r="4.2" fill="#4285f4"/></svg>
<svg class="a" style="left:1737px;top:1054px" width="13" height="8" viewBox="0 0 13 8"><path d="M1 7 L6.5 1.5 L12 7" stroke="#fff" stroke-width="1.3" fill="none"/></svg>
<svg class="a" style="left:1759px;top:1053px" width="18" height="14" viewBox="0 0 18 14"><rect x="3" y="1" width="14" height="9" fill="none" stroke="#fff" stroke-width="1.2"/><path d="M10 10 V13 M6 13 H14" stroke="#fff" stroke-width="1.2"/><rect x="0.5" y="0.5" width="4" height="4" fill="#06080c" stroke="#fff"/></svg>
<svg class="a" style="left:1783px;top:1052px" width="17" height="16" viewBox="0 0 17 16"><path d="M1 5 H4 L8 1 V15 L4 11 H1Z" fill="none" stroke="#fff" stroke-width="1.2"/><path d="M10.5 5 Q12 8 10.5 11 M12.5 3 Q15 8 12.5 13 M14.5 1 Q18 8 14.5 15" stroke="#fff" stroke-width="1.1" fill="none"/></svg>
<div class="t" style="left:1813px;top:1043px;font-size:12.76px;color:#f2f2f2;transform:scaleX(0.9091);transform-origin:0 0;">6:55 PM</div>
<div class="t" style="left:1808px;top:1061px;font-size:13.09px;color:#f2f2f2;transform:scaleX(0.9091);transform-origin:0 0;">2/18/2025</div>
<svg class="a" style="left:1879px;top:1052px" width="17" height="16" viewBox="0 0 17 16"><path d="M0.7 0.7 H16.3 V11.5 H10 L8.5 14.5 L7 11.5 H0.7Z" fill="none" stroke="#fff" stroke-width="1.2"/></svg>
</body></html>
